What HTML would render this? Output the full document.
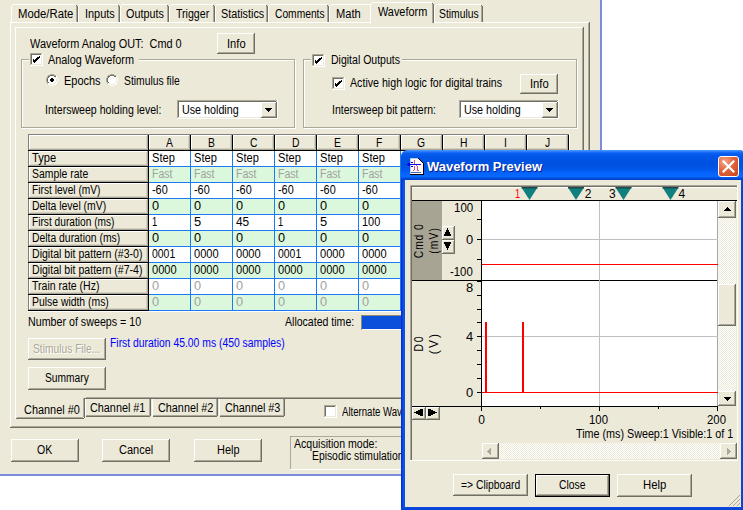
<!DOCTYPE html>
<html><head><meta charset="utf-8"><style>
html,body{margin:0;padding:0}
body{width:743px;height:510px;position:relative;overflow:hidden;background:#fff;font-family:"Liberation Sans", sans-serif;font-size:11px;color:#000}
.a{position:absolute}
.t{white-space:pre}
</style></head><body>
<div class="a" style="left:0px;top:0px;width:600px;height:474px;background:#ECE9D8;"></div>
<div class="a" style="left:600px;top:0px;width:2px;height:476px;background:#7B8BDF;"></div>
<div class="a" style="left:0px;top:474px;width:602px;height:2px;background:#7B8BDF;"></div>
<div class="a" style="left:10px;top:22px;width:580px;height:1px;background:#FFFFFF;"></div>
<div class="a" style="left:10px;top:22px;width:1px;height:406px;background:#FFFFFF;"></div>
<div class="a" style="left:10px;top:427px;width:580px;height:1px;background:#716F64;"></div>
<div class="a" style="left:589px;top:22px;width:1px;height:406px;background:#716F64;"></div>
<div class="a" style="left:11px;top:426px;width:578px;height:1px;background:#ACA899;"></div>
<div class="a" style="left:588px;top:23px;width:1px;height:404px;background:#ACA899;"></div>
<div class="a" style="left:11px;top:4px;width:67px;height:18px;background:#ECE9D8;"></div>
<div class="a" style="left:13px;top:4px;width:63px;height:1px;background:#FFFFFF;"></div>
<div class="a" style="left:12px;top:5px;width:1px;height:1px;background:#FFFFFF;"></div>
<div class="a" style="left:11px;top:6px;width:1px;height:17px;background:#FFFFFF;"></div>
<div class="a" style="left:77px;top:6px;width:1px;height:16px;background:#716F64;"></div>
<div class="a" style="left:76px;top:5px;width:1px;height:1px;background:#716F64;"></div>
<div class="a" style="left:76px;top:6px;width:1px;height:16px;background:#ACA899;"></div>
<div class="a t" style="left:18.00px;top:7px;line-height:14px;font-size:12px;color:#000;transform:scaleX(0.9437);transform-origin:0 0;">Mode/Rate</div>
<div class="a" style="left:78px;top:4px;width:42px;height:18px;background:#ECE9D8;"></div>
<div class="a" style="left:80px;top:4px;width:38px;height:1px;background:#FFFFFF;"></div>
<div class="a" style="left:79px;top:5px;width:1px;height:1px;background:#FFFFFF;"></div>
<div class="a" style="left:78px;top:6px;width:1px;height:17px;background:#FFFFFF;"></div>
<div class="a" style="left:119px;top:6px;width:1px;height:16px;background:#716F64;"></div>
<div class="a" style="left:118px;top:5px;width:1px;height:1px;background:#716F64;"></div>
<div class="a" style="left:118px;top:6px;width:1px;height:16px;background:#ACA899;"></div>
<div class="a t" style="left:84.70px;top:7px;line-height:14px;font-size:12px;color:#000;transform:scaleX(0.9112);transform-origin:0 0;">Inputs</div>
<div class="a" style="left:120px;top:4px;width:49px;height:18px;background:#ECE9D8;"></div>
<div class="a" style="left:122px;top:4px;width:45px;height:1px;background:#FFFFFF;"></div>
<div class="a" style="left:121px;top:5px;width:1px;height:1px;background:#FFFFFF;"></div>
<div class="a" style="left:120px;top:6px;width:1px;height:17px;background:#FFFFFF;"></div>
<div class="a" style="left:168px;top:6px;width:1px;height:16px;background:#716F64;"></div>
<div class="a" style="left:167px;top:5px;width:1px;height:1px;background:#716F64;"></div>
<div class="a" style="left:167px;top:6px;width:1px;height:16px;background:#ACA899;"></div>
<div class="a t" style="left:126.20px;top:7px;line-height:14px;font-size:12px;color:#000;transform:scaleX(0.8993);transform-origin:0 0;">Outputs</div>
<div class="a" style="left:169px;top:4px;width:46px;height:18px;background:#ECE9D8;"></div>
<div class="a" style="left:171px;top:4px;width:42px;height:1px;background:#FFFFFF;"></div>
<div class="a" style="left:170px;top:5px;width:1px;height:1px;background:#FFFFFF;"></div>
<div class="a" style="left:169px;top:6px;width:1px;height:17px;background:#FFFFFF;"></div>
<div class="a" style="left:214px;top:6px;width:1px;height:16px;background:#716F64;"></div>
<div class="a" style="left:213px;top:5px;width:1px;height:1px;background:#716F64;"></div>
<div class="a" style="left:213px;top:6px;width:1px;height:16px;background:#ACA899;"></div>
<div class="a t" style="left:175.90px;top:7px;line-height:14px;font-size:12px;color:#000;transform:scaleX(0.8835);transform-origin:0 0;">Trigger</div>
<div class="a" style="left:215px;top:4px;width:53px;height:18px;background:#ECE9D8;"></div>
<div class="a" style="left:217px;top:4px;width:49px;height:1px;background:#FFFFFF;"></div>
<div class="a" style="left:216px;top:5px;width:1px;height:1px;background:#FFFFFF;"></div>
<div class="a" style="left:215px;top:6px;width:1px;height:17px;background:#FFFFFF;"></div>
<div class="a" style="left:267px;top:6px;width:1px;height:16px;background:#716F64;"></div>
<div class="a" style="left:266px;top:5px;width:1px;height:1px;background:#716F64;"></div>
<div class="a" style="left:266px;top:6px;width:1px;height:16px;background:#ACA899;"></div>
<div class="a t" style="left:220.50px;top:7px;line-height:14px;font-size:12px;color:#000;transform:scaleX(0.8997);transform-origin:0 0;">Statistics</div>
<div class="a" style="left:268px;top:4px;width:61px;height:18px;background:#ECE9D8;"></div>
<div class="a" style="left:270px;top:4px;width:57px;height:1px;background:#FFFFFF;"></div>
<div class="a" style="left:269px;top:5px;width:1px;height:1px;background:#FFFFFF;"></div>
<div class="a" style="left:268px;top:6px;width:1px;height:17px;background:#FFFFFF;"></div>
<div class="a" style="left:328px;top:6px;width:1px;height:16px;background:#716F64;"></div>
<div class="a" style="left:327px;top:5px;width:1px;height:1px;background:#716F64;"></div>
<div class="a" style="left:327px;top:6px;width:1px;height:16px;background:#ACA899;"></div>
<div class="a t" style="left:274.70px;top:7px;line-height:14px;font-size:12px;color:#000;transform:scaleX(0.8549);transform-origin:0 0;">Comments</div>
<div class="a" style="left:329px;top:4px;width:43px;height:18px;background:#ECE9D8;"></div>
<div class="a" style="left:331px;top:4px;width:39px;height:1px;background:#FFFFFF;"></div>
<div class="a" style="left:330px;top:5px;width:1px;height:1px;background:#FFFFFF;"></div>
<div class="a" style="left:329px;top:6px;width:1px;height:17px;background:#FFFFFF;"></div>
<div class="a" style="left:371px;top:6px;width:1px;height:16px;background:#716F64;"></div>
<div class="a" style="left:370px;top:5px;width:1px;height:1px;background:#716F64;"></div>
<div class="a" style="left:370px;top:6px;width:1px;height:16px;background:#ACA899;"></div>
<div class="a t" style="left:335.60px;top:7px;line-height:14px;font-size:12px;color:#000;transform:scaleX(0.9255);transform-origin:0 0;">Math</div>
<div class="a" style="left:434px;top:4px;width:49px;height:18px;background:#ECE9D8;"></div>
<div class="a" style="left:436px;top:4px;width:45px;height:1px;background:#FFFFFF;"></div>
<div class="a" style="left:435px;top:5px;width:1px;height:1px;background:#FFFFFF;"></div>
<div class="a" style="left:434px;top:6px;width:1px;height:17px;background:#FFFFFF;"></div>
<div class="a" style="left:482px;top:6px;width:1px;height:16px;background:#716F64;"></div>
<div class="a" style="left:481px;top:5px;width:1px;height:1px;background:#716F64;"></div>
<div class="a" style="left:481px;top:6px;width:1px;height:16px;background:#ACA899;"></div>
<div class="a t" style="left:438.70px;top:7px;line-height:14px;font-size:12px;color:#000;transform:scaleX(0.8628);transform-origin:0 0;">Stimulus</div>
<div class="a" style="left:370px;top:2px;width:64px;height:21px;background:#ECE9D8;"></div>
<div class="a" style="left:372px;top:2px;width:60px;height:1px;background:#FFFFFF;"></div>
<div class="a" style="left:371px;top:3px;width:1px;height:1px;background:#FFFFFF;"></div>
<div class="a" style="left:370px;top:4px;width:1px;height:20px;background:#FFFFFF;"></div>
<div class="a" style="left:433px;top:4px;width:1px;height:19px;background:#716F64;"></div>
<div class="a" style="left:432px;top:3px;width:1px;height:1px;background:#716F64;"></div>
<div class="a" style="left:432px;top:4px;width:1px;height:19px;background:#ACA899;"></div>
<div class="a t" style="left:377.80px;top:5px;line-height:14px;font-size:12px;color:#000;transform:scaleX(0.9072);transform-origin:0 0;">Waveform</div>
<div class="a" style="left:15px;top:27px;width:569px;height:1px;background:#FFFFFF;"></div>
<div class="a" style="left:15px;top:27px;width:1px;height:392px;background:#FFFFFF;"></div>
<div class="a" style="left:583px;top:27px;width:1px;height:372px;background:#716F64;"></div>
<div class="a" style="left:582px;top:28px;width:1px;height:370px;background:#ACA899;"></div>
<div class="a t" style="left:30.00px;top:37px;line-height:14px;font-size:12px;color:#000;transform:scaleX(0.9086);transform-origin:0 0;">Waveform Analog OUT:  Cmd 0</div>
<div class="a" style="left:217px;top:33px;width:38px;height:21px;background:#ECE9D8;"></div>
<div class="a" style="left:217px;top:33px;width:38px;height:1px;background:#FFFFFF;"></div>
<div class="a" style="left:217px;top:33px;width:1px;height:21px;background:#FFFFFF;"></div>
<div class="a" style="left:217px;top:53px;width:38px;height:1px;background:#716F64;"></div>
<div class="a" style="left:254px;top:33px;width:1px;height:21px;background:#716F64;"></div>
<div class="a" style="left:218px;top:34px;width:36px;height:1px;background:#ECE9D8;"></div>
<div class="a" style="left:218px;top:34px;width:1px;height:19px;background:#ECE9D8;"></div>
<div class="a" style="left:218px;top:52px;width:36px;height:1px;background:#ACA899;"></div>
<div class="a" style="left:253px;top:34px;width:1px;height:19px;background:#ACA899;"></div>
<div class="a" style="left:217px;top:33px;width:37px;height:1px;background:#FFFFFF;"></div>
<div class="a" style="left:217px;top:33px;width:1px;height:20px;background:#FFFFFF;"></div>
<div class="a t" style="left:226.70px;top:37px;line-height:14px;font-size:12px;color:#000;transform:scaleX(0.9293);transform-origin:0 0;">Info</div>
<div class="a" style="left:21px;top:59px;width:274px;height:1px;background:#ACA899;"></div>
<div class="a" style="left:21px;top:59px;width:1px;height:69px;background:#ACA899;"></div>
<div class="a" style="left:21px;top:127px;width:274px;height:1px;background:#ACA899;"></div>
<div class="a" style="left:294px;top:59px;width:1px;height:69px;background:#ACA899;"></div>
<div class="a" style="left:22px;top:60px;width:274px;height:1px;background:#FFFFFF;"></div>
<div class="a" style="left:22px;top:60px;width:1px;height:69px;background:#FFFFFF;"></div>
<div class="a" style="left:22px;top:128px;width:274px;height:1px;background:#FFFFFF;"></div>
<div class="a" style="left:295px;top:60px;width:1px;height:69px;background:#FFFFFF;"></div>
<div class="a" style="left:22px;top:60px;width:272px;height:1px;background:#FFFFFF;"></div>
<div class="a" style="left:22px;top:60px;width:1px;height:67px;background:#FFFFFF;"></div>
<div class="a" style="left:21px;top:127px;width:274px;height:1px;background:#ACA899;"></div>
<div class="a" style="left:294px;top:59px;width:1px;height:69px;background:#ACA899;"></div>
<div class="a" style="left:29px;top:52px;width:110px;height:14px;background:#ECE9D8;"></div>
<div class="a" style="left:30px;top:53px;width:13px;height:13px;background:#fff;"></div>
<div class="a" style="left:30px;top:53px;width:13px;height:1px;background:#ACA899;"></div>
<div class="a" style="left:30px;top:53px;width:1px;height:13px;background:#ACA899;"></div>
<div class="a" style="left:30px;top:65px;width:13px;height:1px;background:#FFFFFF;"></div>
<div class="a" style="left:42px;top:53px;width:1px;height:13px;background:#FFFFFF;"></div>
<div class="a" style="left:31px;top:54px;width:11px;height:1px;background:#716F64;"></div>
<div class="a" style="left:31px;top:54px;width:1px;height:11px;background:#716F64;"></div>
<div class="a" style="left:31px;top:64px;width:11px;height:1px;background:#ECE9D8;"></div>
<div class="a" style="left:41px;top:54px;width:1px;height:11px;background:#ECE9D8;"></div>
<div class="a" style="left:30px;top:53px;width:12px;height:1px;background:#ACA899;"></div>
<div class="a" style="left:30px;top:53px;width:1px;height:12px;background:#ACA899;"></div>
<svg class="a" style="left:33px;top:56px" width="7" height="7" viewBox="0 0 7 7" shape-rendering="crispEdges"><path d="M6 0h1v2h-1v1h-1v1h-1v1h-1v1h-1v1h-1v-1h-1v-1h-1v-3h1v1h1v1h1v-1h1v-1h1v-1h1z" fill="#000"/></svg>
<div class="a t" style="left:48.20px;top:53px;line-height:14px;font-size:12px;color:#000;transform:scaleX(0.9059);transform-origin:0 0;">Analog Waveform</div>
<svg class="a" style="left:46px;top:74px" width="12" height="12" viewBox="0 0 12 12" shape-rendering="crispEdges">
<path d="M4 0h4v1h2v1h1v2h1v4h-1v2h-1v1h-2v1h-4v-1h-2v-1h-1v-2h-1v-4h1v-2h1v-1h2z" fill="#fff"/>
<path d="M4 0h4v1h-4zM2 1h2v1h-2zM8 1h2v1h-2zM1 2h1v2h-1zM0 4h1v4h-1zM1 8h1v2h-1z" fill="#ACA899"/>
<path d="M4 1h4v1h-4zM2 2h2v1h-2zM8 2h2v1h-2zM2 3h1v1h-1zM1 4h1v4h-1zM2 8h1v1h-1z" fill="#716F64"/>
<path d="M10 2h1v2h-1zM11 4h1v4h-1zM10 8h1v2h-1zM8 10h2v1h-2zM4 11h4v1h-4zM2 10h2v1h-2z" fill="#fff"/>
<path d="M9 3h1v1h-1zM10 4h1v4h-1zM9 8h1v1h-1zM8 9h1v1h-1zM4 10h4v1h-4zM3 9h1v1h-1z" fill="#ECE9D8"/>
<path d="M5 4h2v1h1v2h-1v1h-2v-1h-1v-2h1z" fill="#000"/>
</svg>
<div class="a t" style="left:63.80px;top:74px;line-height:14px;font-size:12px;color:#000;transform:scaleX(0.9143);transform-origin:0 0;">Epochs</div>
<svg class="a" style="left:106px;top:74px" width="12" height="12" viewBox="0 0 12 12" shape-rendering="crispEdges">
<path d="M4 0h4v1h2v1h1v2h1v4h-1v2h-1v1h-2v1h-4v-1h-2v-1h-1v-2h-1v-4h1v-2h1v-1h2z" fill="#fff"/>
<path d="M4 0h4v1h-4zM2 1h2v1h-2zM8 1h2v1h-2zM1 2h1v2h-1zM0 4h1v4h-1zM1 8h1v2h-1z" fill="#ACA899"/>
<path d="M4 1h4v1h-4zM2 2h2v1h-2zM8 2h2v1h-2zM2 3h1v1h-1zM1 4h1v4h-1zM2 8h1v1h-1z" fill="#716F64"/>
<path d="M10 2h1v2h-1zM11 4h1v4h-1zM10 8h1v2h-1zM8 10h2v1h-2zM4 11h4v1h-4zM2 10h2v1h-2z" fill="#fff"/>
<path d="M9 3h1v1h-1zM10 4h1v4h-1zM9 8h1v1h-1zM8 9h1v1h-1zM4 10h4v1h-4zM3 9h1v1h-1z" fill="#ECE9D8"/>

</svg>
<div class="a t" style="left:123.80px;top:74px;line-height:14px;font-size:12px;color:#000;transform:scaleX(0.8611);transform-origin:0 0;">Stimulus file</div>
<div class="a t" style="left:45.40px;top:103px;line-height:14px;font-size:12px;color:#000;transform:scaleX(0.8812);transform-origin:0 0;">Intersweep holding level:</div>
<div class="a" style="left:177px;top:100px;width:101px;height:19px;background:#fff;"></div>
<div class="a" style="left:177px;top:100px;width:101px;height:1px;background:#ACA899;"></div>
<div class="a" style="left:177px;top:100px;width:1px;height:19px;background:#ACA899;"></div>
<div class="a" style="left:177px;top:118px;width:101px;height:1px;background:#FFFFFF;"></div>
<div class="a" style="left:277px;top:100px;width:1px;height:19px;background:#FFFFFF;"></div>
<div class="a" style="left:178px;top:101px;width:99px;height:1px;background:#716F64;"></div>
<div class="a" style="left:178px;top:101px;width:1px;height:17px;background:#716F64;"></div>
<div class="a" style="left:178px;top:117px;width:99px;height:1px;background:#ECE9D8;"></div>
<div class="a" style="left:276px;top:101px;width:1px;height:17px;background:#ECE9D8;"></div>
<div class="a" style="left:177px;top:100px;width:100px;height:1px;background:#ACA899;"></div>
<div class="a" style="left:177px;top:100px;width:1px;height:18px;background:#ACA899;"></div>
<div class="a" style="left:261px;top:102px;width:16px;height:16px;background:#ECE9D8;"></div>
<div class="a" style="left:261px;top:102px;width:16px;height:1px;background:#FFFFFF;"></div>
<div class="a" style="left:261px;top:102px;width:1px;height:16px;background:#FFFFFF;"></div>
<div class="a" style="left:261px;top:117px;width:16px;height:1px;background:#716F64;"></div>
<div class="a" style="left:276px;top:102px;width:1px;height:16px;background:#716F64;"></div>
<div class="a" style="left:262px;top:103px;width:14px;height:1px;background:#ECE9D8;"></div>
<div class="a" style="left:262px;top:103px;width:1px;height:14px;background:#ECE9D8;"></div>
<div class="a" style="left:262px;top:116px;width:14px;height:1px;background:#ACA899;"></div>
<div class="a" style="left:275px;top:103px;width:1px;height:14px;background:#ACA899;"></div>
<div class="a" style="left:261px;top:102px;width:15px;height:1px;background:#FFFFFF;"></div>
<div class="a" style="left:261px;top:102px;width:1px;height:15px;background:#FFFFFF;"></div>
<svg class="a" style="left:265px;top:108px" width="7" height="4" shape-rendering="crispEdges"><path d="M0 0h7v1h-1v1h-1v1h-1v1h-1v-1h-1v-1h-1v-1h-1z" fill="#000"/></svg>
<div class="a t" style="left:182.00px;top:103px;line-height:14px;font-size:12px;color:#000;transform:scaleX(0.8947);transform-origin:0 0;">Use holding</div>
<div class="a" style="left:303px;top:59px;width:274px;height:1px;background:#ACA899;"></div>
<div class="a" style="left:303px;top:59px;width:1px;height:69px;background:#ACA899;"></div>
<div class="a" style="left:303px;top:127px;width:274px;height:1px;background:#ACA899;"></div>
<div class="a" style="left:576px;top:59px;width:1px;height:69px;background:#ACA899;"></div>
<div class="a" style="left:304px;top:60px;width:274px;height:1px;background:#FFFFFF;"></div>
<div class="a" style="left:304px;top:60px;width:1px;height:69px;background:#FFFFFF;"></div>
<div class="a" style="left:304px;top:128px;width:274px;height:1px;background:#FFFFFF;"></div>
<div class="a" style="left:577px;top:60px;width:1px;height:69px;background:#FFFFFF;"></div>
<div class="a" style="left:304px;top:60px;width:272px;height:1px;background:#FFFFFF;"></div>
<div class="a" style="left:304px;top:60px;width:1px;height:67px;background:#FFFFFF;"></div>
<div class="a" style="left:303px;top:127px;width:274px;height:1px;background:#ACA899;"></div>
<div class="a" style="left:576px;top:59px;width:1px;height:69px;background:#ACA899;"></div>
<div class="a" style="left:311px;top:52px;width:91px;height:14px;background:#ECE9D8;"></div>
<div class="a" style="left:312px;top:54px;width:13px;height:13px;background:#fff;"></div>
<div class="a" style="left:312px;top:54px;width:13px;height:1px;background:#ACA899;"></div>
<div class="a" style="left:312px;top:54px;width:1px;height:13px;background:#ACA899;"></div>
<div class="a" style="left:312px;top:66px;width:13px;height:1px;background:#FFFFFF;"></div>
<div class="a" style="left:324px;top:54px;width:1px;height:13px;background:#FFFFFF;"></div>
<div class="a" style="left:313px;top:55px;width:11px;height:1px;background:#716F64;"></div>
<div class="a" style="left:313px;top:55px;width:1px;height:11px;background:#716F64;"></div>
<div class="a" style="left:313px;top:65px;width:11px;height:1px;background:#ECE9D8;"></div>
<div class="a" style="left:323px;top:55px;width:1px;height:11px;background:#ECE9D8;"></div>
<div class="a" style="left:312px;top:54px;width:12px;height:1px;background:#ACA899;"></div>
<div class="a" style="left:312px;top:54px;width:1px;height:12px;background:#ACA899;"></div>
<svg class="a" style="left:315px;top:57px" width="7" height="7" viewBox="0 0 7 7" shape-rendering="crispEdges"><path d="M6 0h1v2h-1v1h-1v1h-1v1h-1v1h-1v1h-1v-1h-1v-1h-1v-3h1v1h1v1h1v-1h1v-1h1v-1h1z" fill="#000"/></svg>
<div class="a t" style="left:331.20px;top:53px;line-height:14px;font-size:12px;color:#000;transform:scaleX(0.8767);transform-origin:0 0;">Digital Outputs</div>
<div class="a" style="left:332px;top:77px;width:13px;height:13px;background:#fff;"></div>
<div class="a" style="left:332px;top:77px;width:13px;height:1px;background:#ACA899;"></div>
<div class="a" style="left:332px;top:77px;width:1px;height:13px;background:#ACA899;"></div>
<div class="a" style="left:332px;top:89px;width:13px;height:1px;background:#FFFFFF;"></div>
<div class="a" style="left:344px;top:77px;width:1px;height:13px;background:#FFFFFF;"></div>
<div class="a" style="left:333px;top:78px;width:11px;height:1px;background:#716F64;"></div>
<div class="a" style="left:333px;top:78px;width:1px;height:11px;background:#716F64;"></div>
<div class="a" style="left:333px;top:88px;width:11px;height:1px;background:#ECE9D8;"></div>
<div class="a" style="left:343px;top:78px;width:1px;height:11px;background:#ECE9D8;"></div>
<div class="a" style="left:332px;top:77px;width:12px;height:1px;background:#ACA899;"></div>
<div class="a" style="left:332px;top:77px;width:1px;height:12px;background:#ACA899;"></div>
<svg class="a" style="left:335px;top:80px" width="7" height="7" viewBox="0 0 7 7" shape-rendering="crispEdges"><path d="M6 0h1v2h-1v1h-1v1h-1v1h-1v1h-1v1h-1v-1h-1v-1h-1v-3h1v1h1v1h1v-1h1v-1h1v-1h1z" fill="#000"/></svg>
<div class="a t" style="left:349.50px;top:76px;line-height:14px;font-size:12px;color:#000;transform:scaleX(0.8873);transform-origin:0 0;">Active high logic for digital trains</div>
<div class="a" style="left:520px;top:74px;width:38px;height:20px;background:#ECE9D8;"></div>
<div class="a" style="left:520px;top:74px;width:38px;height:1px;background:#FFFFFF;"></div>
<div class="a" style="left:520px;top:74px;width:1px;height:20px;background:#FFFFFF;"></div>
<div class="a" style="left:520px;top:93px;width:38px;height:1px;background:#716F64;"></div>
<div class="a" style="left:557px;top:74px;width:1px;height:20px;background:#716F64;"></div>
<div class="a" style="left:521px;top:75px;width:36px;height:1px;background:#ECE9D8;"></div>
<div class="a" style="left:521px;top:75px;width:1px;height:18px;background:#ECE9D8;"></div>
<div class="a" style="left:521px;top:92px;width:36px;height:1px;background:#ACA899;"></div>
<div class="a" style="left:556px;top:75px;width:1px;height:18px;background:#ACA899;"></div>
<div class="a" style="left:520px;top:74px;width:37px;height:1px;background:#FFFFFF;"></div>
<div class="a" style="left:520px;top:74px;width:1px;height:19px;background:#FFFFFF;"></div>
<div class="a t" style="left:529.65px;top:77px;line-height:14px;font-size:12px;color:#000;transform:scaleX(0.9343);transform-origin:0 0;">Info</div>
<div class="a t" style="left:331.90px;top:103px;line-height:14px;font-size:12px;color:#000;transform:scaleX(0.8751);transform-origin:0 0;">Intersweep bit pattern:</div>
<div class="a" style="left:459px;top:100px;width:100px;height:19px;background:#fff;"></div>
<div class="a" style="left:459px;top:100px;width:100px;height:1px;background:#ACA899;"></div>
<div class="a" style="left:459px;top:100px;width:1px;height:19px;background:#ACA899;"></div>
<div class="a" style="left:459px;top:118px;width:100px;height:1px;background:#FFFFFF;"></div>
<div class="a" style="left:558px;top:100px;width:1px;height:19px;background:#FFFFFF;"></div>
<div class="a" style="left:460px;top:101px;width:98px;height:1px;background:#716F64;"></div>
<div class="a" style="left:460px;top:101px;width:1px;height:17px;background:#716F64;"></div>
<div class="a" style="left:460px;top:117px;width:98px;height:1px;background:#ECE9D8;"></div>
<div class="a" style="left:557px;top:101px;width:1px;height:17px;background:#ECE9D8;"></div>
<div class="a" style="left:459px;top:100px;width:99px;height:1px;background:#ACA899;"></div>
<div class="a" style="left:459px;top:100px;width:1px;height:18px;background:#ACA899;"></div>
<div class="a" style="left:542px;top:102px;width:16px;height:16px;background:#ECE9D8;"></div>
<div class="a" style="left:542px;top:102px;width:16px;height:1px;background:#FFFFFF;"></div>
<div class="a" style="left:542px;top:102px;width:1px;height:16px;background:#FFFFFF;"></div>
<div class="a" style="left:542px;top:117px;width:16px;height:1px;background:#716F64;"></div>
<div class="a" style="left:557px;top:102px;width:1px;height:16px;background:#716F64;"></div>
<div class="a" style="left:543px;top:103px;width:14px;height:1px;background:#ECE9D8;"></div>
<div class="a" style="left:543px;top:103px;width:1px;height:14px;background:#ECE9D8;"></div>
<div class="a" style="left:543px;top:116px;width:14px;height:1px;background:#ACA899;"></div>
<div class="a" style="left:556px;top:103px;width:1px;height:14px;background:#ACA899;"></div>
<div class="a" style="left:542px;top:102px;width:15px;height:1px;background:#FFFFFF;"></div>
<div class="a" style="left:542px;top:102px;width:1px;height:15px;background:#FFFFFF;"></div>
<svg class="a" style="left:546px;top:108px" width="7" height="4" shape-rendering="crispEdges"><path d="M0 0h7v1h-1v1h-1v1h-1v1h-1v-1h-1v-1h-1v-1h-1z" fill="#000"/></svg>
<div class="a t" style="left:464.00px;top:103px;line-height:14px;font-size:12px;color:#000;transform:scaleX(0.8947);transform-origin:0 0;">Use holding</div>
<div class="a" style="left:28px;top:134px;width:541px;height:1px;background:#808080;"></div>
<div class="a" style="left:28px;top:134px;width:1px;height:177px;background:#808080;"></div>
<div class="a" style="left:29px;top:135px;width:119px;height:15px;background:#ECE9D8;"></div>
<div class="a" style="left:30px;top:148px;width:117px;height:1px;background:#D4D0C0;"></div>
<div class="a" style="left:146px;top:136px;width:1px;height:13px;background:#D4D0C0;"></div>
<div class="a" style="left:29px;top:135px;width:119px;height:1px;background:#FFFFFF;"></div>
<div class="a" style="left:29px;top:135px;width:1px;height:15px;background:#FFFFFF;"></div>
<div class="a" style="left:29px;top:149px;width:119px;height:1px;background:#ACA899;"></div>
<div class="a" style="left:147px;top:135px;width:1px;height:15px;background:#ACA899;"></div>
<div class="a" style="left:149px;top:135px;width:41px;height:15px;background:#ECE9D8;"></div>
<div class="a" style="left:150px;top:148px;width:39px;height:1px;background:#D4D0C0;"></div>
<div class="a" style="left:188px;top:136px;width:1px;height:13px;background:#D4D0C0;"></div>
<div class="a" style="left:149px;top:135px;width:41px;height:1px;background:#FFFFFF;"></div>
<div class="a" style="left:149px;top:135px;width:1px;height:15px;background:#FFFFFF;"></div>
<div class="a" style="left:149px;top:149px;width:41px;height:1px;background:#ACA899;"></div>
<div class="a" style="left:189px;top:135px;width:1px;height:15px;background:#ACA899;"></div>
<div class="a t" style="left:166.05px;top:136px;line-height:14px;font-size:12px;color:#000;transform:scaleX(0.8620);transform-origin:0 0;">A</div>
<div class="a" style="left:191px;top:135px;width:41px;height:15px;background:#ECE9D8;"></div>
<div class="a" style="left:192px;top:148px;width:39px;height:1px;background:#D4D0C0;"></div>
<div class="a" style="left:230px;top:136px;width:1px;height:13px;background:#D4D0C0;"></div>
<div class="a" style="left:191px;top:135px;width:41px;height:1px;background:#FFFFFF;"></div>
<div class="a" style="left:191px;top:135px;width:1px;height:15px;background:#FFFFFF;"></div>
<div class="a" style="left:191px;top:149px;width:41px;height:1px;background:#ACA899;"></div>
<div class="a" style="left:231px;top:135px;width:1px;height:15px;background:#ACA899;"></div>
<div class="a t" style="left:208.05px;top:136px;line-height:14px;font-size:12px;color:#000;transform:scaleX(0.8620);transform-origin:0 0;">B</div>
<div class="a" style="left:233px;top:135px;width:41px;height:15px;background:#ECE9D8;"></div>
<div class="a" style="left:234px;top:148px;width:39px;height:1px;background:#D4D0C0;"></div>
<div class="a" style="left:272px;top:136px;width:1px;height:13px;background:#D4D0C0;"></div>
<div class="a" style="left:233px;top:135px;width:41px;height:1px;background:#FFFFFF;"></div>
<div class="a" style="left:233px;top:135px;width:1px;height:15px;background:#FFFFFF;"></div>
<div class="a" style="left:233px;top:149px;width:41px;height:1px;background:#ACA899;"></div>
<div class="a" style="left:273px;top:135px;width:1px;height:15px;background:#ACA899;"></div>
<div class="a t" style="left:249.76px;top:136px;line-height:14px;font-size:12px;color:#000;transform:scaleX(0.8620);transform-origin:0 0;">C</div>
<div class="a" style="left:275px;top:135px;width:41px;height:15px;background:#ECE9D8;"></div>
<div class="a" style="left:276px;top:148px;width:39px;height:1px;background:#D4D0C0;"></div>
<div class="a" style="left:314px;top:136px;width:1px;height:13px;background:#D4D0C0;"></div>
<div class="a" style="left:275px;top:135px;width:41px;height:1px;background:#FFFFFF;"></div>
<div class="a" style="left:275px;top:135px;width:1px;height:15px;background:#FFFFFF;"></div>
<div class="a" style="left:275px;top:149px;width:41px;height:1px;background:#ACA899;"></div>
<div class="a" style="left:315px;top:135px;width:1px;height:15px;background:#ACA899;"></div>
<div class="a t" style="left:291.76px;top:136px;line-height:14px;font-size:12px;color:#000;transform:scaleX(0.8620);transform-origin:0 0;">D</div>
<div class="a" style="left:317px;top:135px;width:41px;height:15px;background:#ECE9D8;"></div>
<div class="a" style="left:318px;top:148px;width:39px;height:1px;background:#D4D0C0;"></div>
<div class="a" style="left:356px;top:136px;width:1px;height:13px;background:#D4D0C0;"></div>
<div class="a" style="left:317px;top:135px;width:41px;height:1px;background:#FFFFFF;"></div>
<div class="a" style="left:317px;top:135px;width:1px;height:15px;background:#FFFFFF;"></div>
<div class="a" style="left:317px;top:149px;width:41px;height:1px;background:#ACA899;"></div>
<div class="a" style="left:357px;top:135px;width:1px;height:15px;background:#ACA899;"></div>
<div class="a t" style="left:334.05px;top:136px;line-height:14px;font-size:12px;color:#000;transform:scaleX(0.8620);transform-origin:0 0;">E</div>
<div class="a" style="left:359px;top:135px;width:41px;height:15px;background:#ECE9D8;"></div>
<div class="a" style="left:360px;top:148px;width:39px;height:1px;background:#D4D0C0;"></div>
<div class="a" style="left:398px;top:136px;width:1px;height:13px;background:#D4D0C0;"></div>
<div class="a" style="left:359px;top:135px;width:41px;height:1px;background:#FFFFFF;"></div>
<div class="a" style="left:359px;top:135px;width:1px;height:15px;background:#FFFFFF;"></div>
<div class="a" style="left:359px;top:149px;width:41px;height:1px;background:#ACA899;"></div>
<div class="a" style="left:399px;top:135px;width:1px;height:15px;background:#ACA899;"></div>
<div class="a t" style="left:376.33px;top:136px;line-height:14px;font-size:12px;color:#000;transform:scaleX(0.8620);transform-origin:0 0;">F</div>
<div class="a" style="left:401px;top:135px;width:41px;height:15px;background:#ECE9D8;"></div>
<div class="a" style="left:402px;top:148px;width:39px;height:1px;background:#D4D0C0;"></div>
<div class="a" style="left:440px;top:136px;width:1px;height:13px;background:#D4D0C0;"></div>
<div class="a" style="left:401px;top:135px;width:41px;height:1px;background:#FFFFFF;"></div>
<div class="a" style="left:401px;top:135px;width:1px;height:15px;background:#FFFFFF;"></div>
<div class="a" style="left:401px;top:149px;width:41px;height:1px;background:#ACA899;"></div>
<div class="a" style="left:441px;top:135px;width:1px;height:15px;background:#ACA899;"></div>
<div class="a t" style="left:417.47px;top:136px;line-height:14px;font-size:12px;color:#000;transform:scaleX(0.8620);transform-origin:0 0;">G</div>
<div class="a" style="left:443px;top:135px;width:41px;height:15px;background:#ECE9D8;"></div>
<div class="a" style="left:444px;top:148px;width:39px;height:1px;background:#D4D0C0;"></div>
<div class="a" style="left:482px;top:136px;width:1px;height:13px;background:#D4D0C0;"></div>
<div class="a" style="left:443px;top:135px;width:41px;height:1px;background:#FFFFFF;"></div>
<div class="a" style="left:443px;top:135px;width:1px;height:15px;background:#FFFFFF;"></div>
<div class="a" style="left:443px;top:149px;width:41px;height:1px;background:#ACA899;"></div>
<div class="a" style="left:483px;top:135px;width:1px;height:15px;background:#ACA899;"></div>
<div class="a t" style="left:459.76px;top:136px;line-height:14px;font-size:12px;color:#000;transform:scaleX(0.8620);transform-origin:0 0;">H</div>
<div class="a" style="left:485px;top:135px;width:41px;height:15px;background:#ECE9D8;"></div>
<div class="a" style="left:486px;top:148px;width:39px;height:1px;background:#D4D0C0;"></div>
<div class="a" style="left:524px;top:136px;width:1px;height:13px;background:#D4D0C0;"></div>
<div class="a" style="left:485px;top:135px;width:41px;height:1px;background:#FFFFFF;"></div>
<div class="a" style="left:485px;top:135px;width:1px;height:15px;background:#FFFFFF;"></div>
<div class="a" style="left:485px;top:149px;width:41px;height:1px;background:#ACA899;"></div>
<div class="a" style="left:525px;top:135px;width:1px;height:15px;background:#ACA899;"></div>
<div class="a t" style="left:504.06px;top:136px;line-height:14px;font-size:12px;color:#000;transform:scaleX(0.8620);transform-origin:0 0;">I</div>
<div class="a" style="left:527px;top:135px;width:41px;height:15px;background:#ECE9D8;"></div>
<div class="a" style="left:528px;top:148px;width:39px;height:1px;background:#D4D0C0;"></div>
<div class="a" style="left:566px;top:136px;width:1px;height:13px;background:#D4D0C0;"></div>
<div class="a" style="left:527px;top:135px;width:41px;height:1px;background:#FFFFFF;"></div>
<div class="a" style="left:527px;top:135px;width:1px;height:15px;background:#FFFFFF;"></div>
<div class="a" style="left:527px;top:149px;width:41px;height:1px;background:#ACA899;"></div>
<div class="a" style="left:567px;top:135px;width:1px;height:15px;background:#ACA899;"></div>
<div class="a t" style="left:544.91px;top:136px;line-height:14px;font-size:12px;color:#000;transform:scaleX(0.8620);transform-origin:0 0;">J</div>
<div class="a" style="left:28px;top:150px;width:541px;height:1px;background:#000;"></div>
<div class="a" style="left:148px;top:135px;width:1px;height:16px;background:#000;"></div>
<div class="a" style="left:190px;top:135px;width:1px;height:16px;background:#000;"></div>
<div class="a" style="left:232px;top:135px;width:1px;height:16px;background:#000;"></div>
<div class="a" style="left:274px;top:135px;width:1px;height:16px;background:#000;"></div>
<div class="a" style="left:316px;top:135px;width:1px;height:16px;background:#000;"></div>
<div class="a" style="left:358px;top:135px;width:1px;height:16px;background:#000;"></div>
<div class="a" style="left:400px;top:135px;width:1px;height:16px;background:#000;"></div>
<div class="a" style="left:442px;top:135px;width:1px;height:16px;background:#000;"></div>
<div class="a" style="left:484px;top:135px;width:1px;height:16px;background:#000;"></div>
<div class="a" style="left:526px;top:135px;width:1px;height:16px;background:#000;"></div>
<div class="a" style="left:568px;top:135px;width:1px;height:16px;background:#000;"></div>
<div class="a" style="left:29px;top:151px;width:119px;height:15px;background:#ECE9D8;"></div>
<div class="a" style="left:30px;top:164px;width:117px;height:1px;background:#D4D0C0;"></div>
<div class="a" style="left:146px;top:152px;width:1px;height:13px;background:#D4D0C0;"></div>
<div class="a" style="left:29px;top:151px;width:119px;height:1px;background:#FFFFFF;"></div>
<div class="a" style="left:29px;top:151px;width:1px;height:15px;background:#FFFFFF;"></div>
<div class="a" style="left:29px;top:165px;width:119px;height:1px;background:#ACA899;"></div>
<div class="a" style="left:147px;top:151px;width:1px;height:15px;background:#ACA899;"></div>
<div class="a" style="left:28px;top:166px;width:121px;height:1px;background:#000;"></div>
<div class="a t" style="left:32.10px;top:151px;line-height:14px;font-size:12px;color:#000;transform:scaleX(0.9302);transform-origin:0 0;">Type</div>
<div class="a" style="left:29px;top:167px;width:119px;height:15px;background:#ECE9D8;"></div>
<div class="a" style="left:30px;top:180px;width:117px;height:1px;background:#D4D0C0;"></div>
<div class="a" style="left:146px;top:168px;width:1px;height:13px;background:#D4D0C0;"></div>
<div class="a" style="left:29px;top:167px;width:119px;height:1px;background:#FFFFFF;"></div>
<div class="a" style="left:29px;top:167px;width:1px;height:15px;background:#FFFFFF;"></div>
<div class="a" style="left:29px;top:181px;width:119px;height:1px;background:#ACA899;"></div>
<div class="a" style="left:147px;top:167px;width:1px;height:15px;background:#ACA899;"></div>
<div class="a" style="left:28px;top:182px;width:121px;height:1px;background:#000;"></div>
<div class="a t" style="left:32.10px;top:167px;line-height:14px;font-size:12px;color:#000;transform:scaleX(0.8686);transform-origin:0 0;">Sample rate</div>
<div class="a" style="left:29px;top:183px;width:119px;height:15px;background:#ECE9D8;"></div>
<div class="a" style="left:30px;top:196px;width:117px;height:1px;background:#D4D0C0;"></div>
<div class="a" style="left:146px;top:184px;width:1px;height:13px;background:#D4D0C0;"></div>
<div class="a" style="left:29px;top:183px;width:119px;height:1px;background:#FFFFFF;"></div>
<div class="a" style="left:29px;top:183px;width:1px;height:15px;background:#FFFFFF;"></div>
<div class="a" style="left:29px;top:197px;width:119px;height:1px;background:#ACA899;"></div>
<div class="a" style="left:147px;top:183px;width:1px;height:15px;background:#ACA899;"></div>
<div class="a" style="left:28px;top:198px;width:121px;height:1px;background:#000;"></div>
<div class="a t" style="left:32.10px;top:183px;line-height:14px;font-size:12px;color:#000;transform:scaleX(0.8491);transform-origin:0 0;">First level (mV)</div>
<div class="a" style="left:29px;top:199px;width:119px;height:15px;background:#ECE9D8;"></div>
<div class="a" style="left:30px;top:212px;width:117px;height:1px;background:#D4D0C0;"></div>
<div class="a" style="left:146px;top:200px;width:1px;height:13px;background:#D4D0C0;"></div>
<div class="a" style="left:29px;top:199px;width:119px;height:1px;background:#FFFFFF;"></div>
<div class="a" style="left:29px;top:199px;width:1px;height:15px;background:#FFFFFF;"></div>
<div class="a" style="left:29px;top:213px;width:119px;height:1px;background:#ACA899;"></div>
<div class="a" style="left:147px;top:199px;width:1px;height:15px;background:#ACA899;"></div>
<div class="a" style="left:28px;top:214px;width:121px;height:1px;background:#000;"></div>
<div class="a t" style="left:32.10px;top:199px;line-height:14px;font-size:12px;color:#000;transform:scaleX(0.8693);transform-origin:0 0;">Delta level (mV)</div>
<div class="a" style="left:29px;top:215px;width:119px;height:15px;background:#ECE9D8;"></div>
<div class="a" style="left:30px;top:228px;width:117px;height:1px;background:#D4D0C0;"></div>
<div class="a" style="left:146px;top:216px;width:1px;height:13px;background:#D4D0C0;"></div>
<div class="a" style="left:29px;top:215px;width:119px;height:1px;background:#FFFFFF;"></div>
<div class="a" style="left:29px;top:215px;width:1px;height:15px;background:#FFFFFF;"></div>
<div class="a" style="left:29px;top:229px;width:119px;height:1px;background:#ACA899;"></div>
<div class="a" style="left:147px;top:215px;width:1px;height:15px;background:#ACA899;"></div>
<div class="a" style="left:28px;top:230px;width:121px;height:1px;background:#000;"></div>
<div class="a t" style="left:32.10px;top:215px;line-height:14px;font-size:12px;color:#000;transform:scaleX(0.8474);transform-origin:0 0;">First duration (ms)</div>
<div class="a" style="left:29px;top:231px;width:119px;height:15px;background:#ECE9D8;"></div>
<div class="a" style="left:30px;top:244px;width:117px;height:1px;background:#D4D0C0;"></div>
<div class="a" style="left:146px;top:232px;width:1px;height:13px;background:#D4D0C0;"></div>
<div class="a" style="left:29px;top:231px;width:119px;height:1px;background:#FFFFFF;"></div>
<div class="a" style="left:29px;top:231px;width:1px;height:15px;background:#FFFFFF;"></div>
<div class="a" style="left:29px;top:245px;width:119px;height:1px;background:#ACA899;"></div>
<div class="a" style="left:147px;top:231px;width:1px;height:15px;background:#ACA899;"></div>
<div class="a" style="left:28px;top:246px;width:121px;height:1px;background:#000;"></div>
<div class="a t" style="left:32.10px;top:231px;line-height:14px;font-size:12px;color:#000;transform:scaleX(0.8643);transform-origin:0 0;">Delta duration (ms)</div>
<div class="a" style="left:29px;top:247px;width:119px;height:15px;background:#ECE9D8;"></div>
<div class="a" style="left:30px;top:260px;width:117px;height:1px;background:#D4D0C0;"></div>
<div class="a" style="left:146px;top:248px;width:1px;height:13px;background:#D4D0C0;"></div>
<div class="a" style="left:29px;top:247px;width:119px;height:1px;background:#FFFFFF;"></div>
<div class="a" style="left:29px;top:247px;width:1px;height:15px;background:#FFFFFF;"></div>
<div class="a" style="left:29px;top:261px;width:119px;height:1px;background:#ACA899;"></div>
<div class="a" style="left:147px;top:247px;width:1px;height:15px;background:#ACA899;"></div>
<div class="a" style="left:28px;top:262px;width:121px;height:1px;background:#000;"></div>
<div class="a t" style="left:32.10px;top:247px;line-height:14px;font-size:12px;color:#000;transform:scaleX(0.8812);transform-origin:0 0;">Digital bit pattern (#3-0)</div>
<div class="a" style="left:29px;top:263px;width:119px;height:15px;background:#ECE9D8;"></div>
<div class="a" style="left:30px;top:276px;width:117px;height:1px;background:#D4D0C0;"></div>
<div class="a" style="left:146px;top:264px;width:1px;height:13px;background:#D4D0C0;"></div>
<div class="a" style="left:29px;top:263px;width:119px;height:1px;background:#FFFFFF;"></div>
<div class="a" style="left:29px;top:263px;width:1px;height:15px;background:#FFFFFF;"></div>
<div class="a" style="left:29px;top:277px;width:119px;height:1px;background:#ACA899;"></div>
<div class="a" style="left:147px;top:263px;width:1px;height:15px;background:#ACA899;"></div>
<div class="a" style="left:28px;top:278px;width:121px;height:1px;background:#000;"></div>
<div class="a t" style="left:32.10px;top:263px;line-height:14px;font-size:12px;color:#000;transform:scaleX(0.8812);transform-origin:0 0;">Digital bit pattern (#7-4)</div>
<div class="a" style="left:29px;top:279px;width:119px;height:15px;background:#ECE9D8;"></div>
<div class="a" style="left:30px;top:292px;width:117px;height:1px;background:#D4D0C0;"></div>
<div class="a" style="left:146px;top:280px;width:1px;height:13px;background:#D4D0C0;"></div>
<div class="a" style="left:29px;top:279px;width:119px;height:1px;background:#FFFFFF;"></div>
<div class="a" style="left:29px;top:279px;width:1px;height:15px;background:#FFFFFF;"></div>
<div class="a" style="left:29px;top:293px;width:119px;height:1px;background:#ACA899;"></div>
<div class="a" style="left:147px;top:279px;width:1px;height:15px;background:#ACA899;"></div>
<div class="a" style="left:28px;top:294px;width:121px;height:1px;background:#000;"></div>
<div class="a t" style="left:32.10px;top:279px;line-height:14px;font-size:12px;color:#000;transform:scaleX(0.8777);transform-origin:0 0;">Train rate (Hz)</div>
<div class="a" style="left:29px;top:295px;width:119px;height:15px;background:#ECE9D8;"></div>
<div class="a" style="left:30px;top:308px;width:117px;height:1px;background:#D4D0C0;"></div>
<div class="a" style="left:146px;top:296px;width:1px;height:13px;background:#D4D0C0;"></div>
<div class="a" style="left:29px;top:295px;width:119px;height:1px;background:#FFFFFF;"></div>
<div class="a" style="left:29px;top:295px;width:1px;height:15px;background:#FFFFFF;"></div>
<div class="a" style="left:29px;top:309px;width:119px;height:1px;background:#ACA899;"></div>
<div class="a" style="left:147px;top:295px;width:1px;height:15px;background:#ACA899;"></div>
<div class="a" style="left:28px;top:310px;width:121px;height:1px;background:#000;"></div>
<div class="a t" style="left:32.10px;top:295px;line-height:14px;font-size:12px;color:#000;transform:scaleX(0.8660);transform-origin:0 0;">Pulse width (ms)</div>
<div class="a" style="left:148px;top:150px;width:1px;height:161px;background:#000;"></div>
<div class="a" style="left:28px;top:311px;width:542px;height:1px;background:#FFFFFF;"></div>
<div class="a" style="left:569px;top:134px;width:1px;height:178px;background:#FFFFFF;"></div>
<div class="a" style="left:149px;top:151px;width:420px;height:15px;background:#fff;"></div>
<div class="a" style="left:149px;top:166px;width:420px;height:1px;background:#1A7AF5;"></div>
<div class="a t" style="left:151.50px;top:151px;line-height:14px;font-size:12px;color:#000;transform:scaleX(0.9235);transform-origin:0 0;">Step</div>
<div class="a t" style="left:193.50px;top:151px;line-height:14px;font-size:12px;color:#000;transform:scaleX(0.9235);transform-origin:0 0;">Step</div>
<div class="a t" style="left:235.50px;top:151px;line-height:14px;font-size:12px;color:#000;transform:scaleX(0.9235);transform-origin:0 0;">Step</div>
<div class="a t" style="left:277.50px;top:151px;line-height:14px;font-size:12px;color:#000;transform:scaleX(0.9235);transform-origin:0 0;">Step</div>
<div class="a t" style="left:319.50px;top:151px;line-height:14px;font-size:12px;color:#000;transform:scaleX(0.9235);transform-origin:0 0;">Step</div>
<div class="a t" style="left:361.50px;top:151px;line-height:14px;font-size:12px;color:#000;transform:scaleX(0.9235);transform-origin:0 0;">Step</div>
<div class="a" style="left:149px;top:167px;width:420px;height:15px;background:#DCF8DC;"></div>
<div class="a" style="left:149px;top:182px;width:420px;height:1px;background:#1A7AF5;"></div>
<div class="a t" style="left:151.50px;top:167px;line-height:14px;font-size:12px;color:#A0A0A0;transform:scaleX(0.8782);transform-origin:0 0;">Fast</div>
<div class="a t" style="left:193.50px;top:167px;line-height:14px;font-size:12px;color:#A0A0A0;transform:scaleX(0.8782);transform-origin:0 0;">Fast</div>
<div class="a t" style="left:235.50px;top:167px;line-height:14px;font-size:12px;color:#A0A0A0;transform:scaleX(0.8782);transform-origin:0 0;">Fast</div>
<div class="a t" style="left:277.50px;top:167px;line-height:14px;font-size:12px;color:#A0A0A0;transform:scaleX(0.8782);transform-origin:0 0;">Fast</div>
<div class="a t" style="left:319.50px;top:167px;line-height:14px;font-size:12px;color:#A0A0A0;transform:scaleX(0.8782);transform-origin:0 0;">Fast</div>
<div class="a t" style="left:361.50px;top:167px;line-height:14px;font-size:12px;color:#A0A0A0;transform:scaleX(0.8782);transform-origin:0 0;">Fast</div>
<div class="a" style="left:149px;top:183px;width:420px;height:15px;background:#fff;"></div>
<div class="a" style="left:149px;top:198px;width:420px;height:1px;background:#1A7AF5;"></div>
<div class="a t" style="left:151.50px;top:183px;line-height:14px;font-size:12px;color:#000;transform:scaleX(0.9052);transform-origin:0 0;">-60</div>
<div class="a t" style="left:193.50px;top:183px;line-height:14px;font-size:12px;color:#000;transform:scaleX(0.9052);transform-origin:0 0;">-60</div>
<div class="a t" style="left:235.50px;top:183px;line-height:14px;font-size:12px;color:#000;transform:scaleX(0.9052);transform-origin:0 0;">-60</div>
<div class="a t" style="left:277.50px;top:183px;line-height:14px;font-size:12px;color:#000;transform:scaleX(0.9052);transform-origin:0 0;">-60</div>
<div class="a t" style="left:319.50px;top:183px;line-height:14px;font-size:12px;color:#000;transform:scaleX(0.9052);transform-origin:0 0;">-60</div>
<div class="a t" style="left:361.50px;top:183px;line-height:14px;font-size:12px;color:#000;transform:scaleX(0.9052);transform-origin:0 0;">-60</div>
<div class="a" style="left:149px;top:199px;width:420px;height:15px;background:#DCF8DC;"></div>
<div class="a" style="left:149px;top:214px;width:420px;height:1px;background:#1A7AF5;"></div>
<div class="a t" style="left:151.50px;top:199px;line-height:14px;font-size:12px;color:#000;transform:scaleX(1.0617);transform-origin:0 0;">0</div>
<div class="a t" style="left:193.50px;top:199px;line-height:14px;font-size:12px;color:#000;transform:scaleX(1.0617);transform-origin:0 0;">0</div>
<div class="a t" style="left:235.50px;top:199px;line-height:14px;font-size:12px;color:#000;transform:scaleX(1.0617);transform-origin:0 0;">0</div>
<div class="a t" style="left:277.50px;top:199px;line-height:14px;font-size:12px;color:#000;transform:scaleX(1.0617);transform-origin:0 0;">0</div>
<div class="a t" style="left:319.50px;top:199px;line-height:14px;font-size:12px;color:#000;transform:scaleX(1.0617);transform-origin:0 0;">0</div>
<div class="a t" style="left:361.50px;top:199px;line-height:14px;font-size:12px;color:#000;transform:scaleX(1.0617);transform-origin:0 0;">0</div>
<div class="a" style="left:149px;top:215px;width:420px;height:15px;background:#fff;"></div>
<div class="a" style="left:149px;top:230px;width:420px;height:1px;background:#1A7AF5;"></div>
<div class="a t" style="left:151.50px;top:215px;line-height:14px;font-size:12px;color:#000;transform:scaleX(0.7776);transform-origin:0 0;">1</div>
<div class="a t" style="left:193.50px;top:215px;line-height:14px;font-size:12px;color:#000;transform:scaleX(1.0766);transform-origin:0 0;">5</div>
<div class="a t" style="left:235.50px;top:215px;line-height:14px;font-size:12px;color:#000;transform:scaleX(0.9881);transform-origin:0 0;">45</div>
<div class="a t" style="left:277.50px;top:215px;line-height:14px;font-size:12px;color:#000;transform:scaleX(0.7776);transform-origin:0 0;">1</div>
<div class="a t" style="left:319.50px;top:215px;line-height:14px;font-size:12px;color:#000;transform:scaleX(1.0766);transform-origin:0 0;">5</div>
<div class="a t" style="left:361.50px;top:215px;line-height:14px;font-size:12px;color:#000;transform:scaleX(0.9086);transform-origin:0 0;">100</div>
<div class="a" style="left:149px;top:231px;width:420px;height:15px;background:#DCF8DC;"></div>
<div class="a" style="left:149px;top:246px;width:420px;height:1px;background:#1A7AF5;"></div>
<div class="a t" style="left:151.50px;top:231px;line-height:14px;font-size:12px;color:#000;transform:scaleX(1.0617);transform-origin:0 0;">0</div>
<div class="a t" style="left:193.50px;top:231px;line-height:14px;font-size:12px;color:#000;transform:scaleX(1.0617);transform-origin:0 0;">0</div>
<div class="a t" style="left:235.50px;top:231px;line-height:14px;font-size:12px;color:#000;transform:scaleX(1.0617);transform-origin:0 0;">0</div>
<div class="a t" style="left:277.50px;top:231px;line-height:14px;font-size:12px;color:#000;transform:scaleX(1.0617);transform-origin:0 0;">0</div>
<div class="a t" style="left:319.50px;top:231px;line-height:14px;font-size:12px;color:#000;transform:scaleX(1.0617);transform-origin:0 0;">0</div>
<div class="a t" style="left:361.50px;top:231px;line-height:14px;font-size:12px;color:#000;transform:scaleX(1.0617);transform-origin:0 0;">0</div>
<div class="a" style="left:149px;top:247px;width:420px;height:15px;background:#fff;"></div>
<div class="a" style="left:149px;top:262px;width:420px;height:1px;background:#1A7AF5;"></div>
<div class="a t" style="left:151.50px;top:247px;line-height:14px;font-size:12px;color:#000;transform:scaleX(0.8688);transform-origin:0 0;">0001</div>
<div class="a t" style="left:193.50px;top:247px;line-height:14px;font-size:12px;color:#000;transform:scaleX(0.9250);transform-origin:0 0;">0000</div>
<div class="a t" style="left:235.50px;top:247px;line-height:14px;font-size:12px;color:#000;transform:scaleX(0.9250);transform-origin:0 0;">0000</div>
<div class="a t" style="left:277.50px;top:247px;line-height:14px;font-size:12px;color:#000;transform:scaleX(0.8688);transform-origin:0 0;">0001</div>
<div class="a t" style="left:319.50px;top:247px;line-height:14px;font-size:12px;color:#000;transform:scaleX(0.9250);transform-origin:0 0;">0000</div>
<div class="a t" style="left:361.50px;top:247px;line-height:14px;font-size:12px;color:#000;transform:scaleX(0.9250);transform-origin:0 0;">0000</div>
<div class="a" style="left:149px;top:263px;width:420px;height:15px;background:#DCF8DC;"></div>
<div class="a" style="left:149px;top:278px;width:420px;height:1px;background:#1A7AF5;"></div>
<div class="a t" style="left:151.50px;top:263px;line-height:14px;font-size:12px;color:#000;transform:scaleX(0.9250);transform-origin:0 0;">0000</div>
<div class="a t" style="left:193.50px;top:263px;line-height:14px;font-size:12px;color:#000;transform:scaleX(0.9250);transform-origin:0 0;">0000</div>
<div class="a t" style="left:235.50px;top:263px;line-height:14px;font-size:12px;color:#000;transform:scaleX(0.9250);transform-origin:0 0;">0000</div>
<div class="a t" style="left:277.50px;top:263px;line-height:14px;font-size:12px;color:#000;transform:scaleX(0.9250);transform-origin:0 0;">0000</div>
<div class="a t" style="left:319.50px;top:263px;line-height:14px;font-size:12px;color:#000;transform:scaleX(0.9250);transform-origin:0 0;">0000</div>
<div class="a t" style="left:361.50px;top:263px;line-height:14px;font-size:12px;color:#000;transform:scaleX(0.9250);transform-origin:0 0;">0000</div>
<div class="a" style="left:149px;top:279px;width:420px;height:15px;background:#fff;"></div>
<div class="a" style="left:149px;top:294px;width:420px;height:1px;background:#1A7AF5;"></div>
<div class="a t" style="left:151.50px;top:279px;line-height:14px;font-size:12px;color:#A0A0A0;transform:scaleX(1.0617);transform-origin:0 0;">0</div>
<div class="a t" style="left:193.50px;top:279px;line-height:14px;font-size:12px;color:#A0A0A0;transform:scaleX(1.0617);transform-origin:0 0;">0</div>
<div class="a t" style="left:235.50px;top:279px;line-height:14px;font-size:12px;color:#A0A0A0;transform:scaleX(1.0617);transform-origin:0 0;">0</div>
<div class="a t" style="left:277.50px;top:279px;line-height:14px;font-size:12px;color:#A0A0A0;transform:scaleX(1.0617);transform-origin:0 0;">0</div>
<div class="a t" style="left:319.50px;top:279px;line-height:14px;font-size:12px;color:#A0A0A0;transform:scaleX(1.0617);transform-origin:0 0;">0</div>
<div class="a t" style="left:361.50px;top:279px;line-height:14px;font-size:12px;color:#A0A0A0;transform:scaleX(1.0617);transform-origin:0 0;">0</div>
<div class="a" style="left:149px;top:295px;width:420px;height:15px;background:#DCF8DC;"></div>
<div class="a" style="left:149px;top:310px;width:420px;height:1px;background:#1A7AF5;"></div>
<div class="a t" style="left:151.50px;top:295px;line-height:14px;font-size:12px;color:#A0A0A0;transform:scaleX(1.0617);transform-origin:0 0;">0</div>
<div class="a t" style="left:193.50px;top:295px;line-height:14px;font-size:12px;color:#A0A0A0;transform:scaleX(1.0617);transform-origin:0 0;">0</div>
<div class="a t" style="left:235.50px;top:295px;line-height:14px;font-size:12px;color:#A0A0A0;transform:scaleX(1.0617);transform-origin:0 0;">0</div>
<div class="a t" style="left:277.50px;top:295px;line-height:14px;font-size:12px;color:#A0A0A0;transform:scaleX(1.0617);transform-origin:0 0;">0</div>
<div class="a t" style="left:319.50px;top:295px;line-height:14px;font-size:12px;color:#A0A0A0;transform:scaleX(1.0617);transform-origin:0 0;">0</div>
<div class="a t" style="left:361.50px;top:295px;line-height:14px;font-size:12px;color:#A0A0A0;transform:scaleX(1.0617);transform-origin:0 0;">0</div>
<div class="a" style="left:190px;top:151px;width:1px;height:160px;background:#1A7AF5;"></div>
<div class="a" style="left:232px;top:151px;width:1px;height:160px;background:#1A7AF5;"></div>
<div class="a" style="left:274px;top:151px;width:1px;height:160px;background:#1A7AF5;"></div>
<div class="a" style="left:316px;top:151px;width:1px;height:160px;background:#1A7AF5;"></div>
<div class="a" style="left:358px;top:151px;width:1px;height:160px;background:#1A7AF5;"></div>
<div class="a" style="left:400px;top:151px;width:1px;height:160px;background:#1A7AF5;"></div>
<div class="a" style="left:442px;top:151px;width:1px;height:160px;background:#1A7AF5;"></div>
<div class="a" style="left:484px;top:151px;width:1px;height:160px;background:#1A7AF5;"></div>
<div class="a" style="left:526px;top:151px;width:1px;height:160px;background:#1A7AF5;"></div>
<div class="a" style="left:568px;top:151px;width:1px;height:160px;background:#1A7AF5;"></div>
<div class="a t" style="left:27.80px;top:315px;line-height:14px;font-size:12px;color:#000;transform:scaleX(0.8908);transform-origin:0 0;">Number of sweeps = 10</div>
<div class="a t" style="left:285.00px;top:315px;line-height:14px;font-size:12px;color:#000;transform:scaleX(0.8793);transform-origin:0 0;">Allocated time:</div>
<div class="a" style="left:361px;top:315px;width:60px;height:15px;background:#FFFFFF;"></div>
<div class="a" style="left:361px;top:315px;width:60px;height:1px;background:#8E8A78;"></div>
<div class="a" style="left:361px;top:315px;width:1px;height:15px;background:#8E8A78;"></div>
<div class="a" style="left:362px;top:316px;width:60px;height:13px;background:#0A50DA;"></div>
<div class="a" style="left:28px;top:338px;width:78px;height:22px;background:#ECE9D8;"></div>
<div class="a" style="left:28px;top:338px;width:78px;height:1px;background:#FFFFFF;"></div>
<div class="a" style="left:28px;top:338px;width:1px;height:22px;background:#FFFFFF;"></div>
<div class="a" style="left:28px;top:359px;width:78px;height:1px;background:#716F64;"></div>
<div class="a" style="left:105px;top:338px;width:1px;height:22px;background:#716F64;"></div>
<div class="a" style="left:29px;top:339px;width:76px;height:1px;background:#ECE9D8;"></div>
<div class="a" style="left:29px;top:339px;width:1px;height:20px;background:#ECE9D8;"></div>
<div class="a" style="left:29px;top:358px;width:76px;height:1px;background:#ACA899;"></div>
<div class="a" style="left:104px;top:339px;width:1px;height:20px;background:#ACA899;"></div>
<div class="a" style="left:28px;top:338px;width:77px;height:1px;background:#FFFFFF;"></div>
<div class="a" style="left:28px;top:338px;width:1px;height:21px;background:#FFFFFF;"></div>
<div class="a t" style="left:34.40px;top:343px;line-height:14px;font-size:12px;color:#fff;transform:scaleX(0.8540);transform-origin:0 0;">Stimulus File...</div>
<div class="a t" style="left:33.40px;top:342px;line-height:14px;font-size:12px;color:#ACA899;transform:scaleX(0.8540);transform-origin:0 0;">Stimulus File...</div>
<div class="a t" style="left:109.70px;top:336px;line-height:14px;font-size:12px;color:#0000FF;transform:scaleX(0.8645);transform-origin:0 0;">First duration 45.00 ms (450 samples)</div>
<div class="a" style="left:28px;top:367px;width:78px;height:23px;background:#ECE9D8;"></div>
<div class="a" style="left:28px;top:367px;width:78px;height:1px;background:#FFFFFF;"></div>
<div class="a" style="left:28px;top:367px;width:1px;height:23px;background:#FFFFFF;"></div>
<div class="a" style="left:28px;top:389px;width:78px;height:1px;background:#716F64;"></div>
<div class="a" style="left:105px;top:367px;width:1px;height:23px;background:#716F64;"></div>
<div class="a" style="left:29px;top:368px;width:76px;height:1px;background:#ECE9D8;"></div>
<div class="a" style="left:29px;top:368px;width:1px;height:21px;background:#ECE9D8;"></div>
<div class="a" style="left:29px;top:388px;width:76px;height:1px;background:#ACA899;"></div>
<div class="a" style="left:104px;top:368px;width:1px;height:21px;background:#ACA899;"></div>
<div class="a" style="left:28px;top:367px;width:77px;height:1px;background:#FFFFFF;"></div>
<div class="a" style="left:28px;top:367px;width:1px;height:22px;background:#FFFFFF;"></div>
<div class="a t" style="left:45.10px;top:371px;line-height:14px;font-size:12px;color:#000;transform:scaleX(0.8531);transform-origin:0 0;">Summary</div>
<div class="a" style="left:16px;top:398px;width:68px;height:20px;background:#ECE9D8;"></div>
<div class="a" style="left:16px;top:418px;width:68px;height:1px;background:#716F64;"></div>
<div class="a" style="left:17px;top:417px;width:66px;height:1px;background:#ACA899;"></div>
<div class="a" style="left:84px;top:398px;width:1px;height:20px;background:#716F64;"></div>
<div class="a" style="left:83px;top:398px;width:1px;height:19px;background:#ACA899;"></div>
<div class="a t" style="left:23.50px;top:403px;line-height:14px;font-size:12px;color:#000;transform:scaleX(0.9089);transform-origin:0 0;">Channel #0</div>
<div class="a" style="left:85px;top:399px;width:66px;height:17px;background:#ECE9D8;"></div>
<div class="a" style="left:85px;top:399px;width:1px;height:17px;background:#FFFFFF;"></div>
<div class="a" style="left:86px;top:416px;width:64px;height:1px;background:#716F64;"></div>
<div class="a" style="left:86px;top:415px;width:63px;height:1px;background:#ACA899;"></div>
<div class="a" style="left:150px;top:399px;width:1px;height:17px;background:#716F64;"></div>
<div class="a" style="left:149px;top:399px;width:1px;height:17px;background:#ACA899;"></div>
<div class="a t" style="left:90.40px;top:401px;line-height:14px;font-size:12px;color:#000;transform:scaleX(0.9024);transform-origin:0 0;">Channel #1</div>
<div class="a" style="left:152px;top:399px;width:66px;height:17px;background:#ECE9D8;"></div>
<div class="a" style="left:152px;top:399px;width:1px;height:17px;background:#FFFFFF;"></div>
<div class="a" style="left:153px;top:416px;width:64px;height:1px;background:#716F64;"></div>
<div class="a" style="left:153px;top:415px;width:63px;height:1px;background:#ACA899;"></div>
<div class="a" style="left:217px;top:399px;width:1px;height:17px;background:#716F64;"></div>
<div class="a" style="left:216px;top:399px;width:1px;height:17px;background:#ACA899;"></div>
<div class="a t" style="left:157.60px;top:401px;line-height:14px;font-size:12px;color:#000;transform:scaleX(0.9024);transform-origin:0 0;">Channel #2</div>
<div class="a" style="left:219px;top:399px;width:66px;height:17px;background:#ECE9D8;"></div>
<div class="a" style="left:219px;top:399px;width:1px;height:17px;background:#FFFFFF;"></div>
<div class="a" style="left:220px;top:416px;width:64px;height:1px;background:#716F64;"></div>
<div class="a" style="left:220px;top:415px;width:63px;height:1px;background:#ACA899;"></div>
<div class="a" style="left:284px;top:399px;width:1px;height:17px;background:#716F64;"></div>
<div class="a" style="left:283px;top:399px;width:1px;height:17px;background:#ACA899;"></div>
<div class="a t" style="left:224.60px;top:401px;line-height:14px;font-size:12px;color:#000;transform:scaleX(0.9024);transform-origin:0 0;">Channel #3</div>
<div class="a" style="left:85px;top:398px;width:499px;height:1px;background:#716F64;"></div>
<div class="a" style="left:86px;top:397px;width:497px;height:1px;background:#ACA899;"></div>
<div class="a" style="left:324px;top:405px;width:13px;height:13px;background:#fff;"></div>
<div class="a" style="left:324px;top:405px;width:13px;height:1px;background:#ACA899;"></div>
<div class="a" style="left:324px;top:405px;width:1px;height:13px;background:#ACA899;"></div>
<div class="a" style="left:324px;top:417px;width:13px;height:1px;background:#FFFFFF;"></div>
<div class="a" style="left:336px;top:405px;width:1px;height:13px;background:#FFFFFF;"></div>
<div class="a" style="left:325px;top:406px;width:11px;height:1px;background:#716F64;"></div>
<div class="a" style="left:325px;top:406px;width:1px;height:11px;background:#716F64;"></div>
<div class="a" style="left:325px;top:416px;width:11px;height:1px;background:#ECE9D8;"></div>
<div class="a" style="left:335px;top:406px;width:1px;height:11px;background:#ECE9D8;"></div>
<div class="a" style="left:324px;top:405px;width:12px;height:1px;background:#ACA899;"></div>
<div class="a" style="left:324px;top:405px;width:1px;height:12px;background:#ACA899;"></div>
<div class="a t" style="left:342.20px;top:405px;line-height:14px;font-size:12px;color:#000;transform:scaleX(0.7993);transform-origin:0 0;">Alternate Waveforms</div>
<div class="a" style="left:11px;top:439px;width:68px;height:23px;background:#ECE9D8;"></div>
<div class="a" style="left:11px;top:439px;width:68px;height:1px;background:#FFFFFF;"></div>
<div class="a" style="left:11px;top:439px;width:1px;height:23px;background:#FFFFFF;"></div>
<div class="a" style="left:11px;top:461px;width:68px;height:1px;background:#716F64;"></div>
<div class="a" style="left:78px;top:439px;width:1px;height:23px;background:#716F64;"></div>
<div class="a" style="left:12px;top:440px;width:66px;height:1px;background:#ECE9D8;"></div>
<div class="a" style="left:12px;top:440px;width:1px;height:21px;background:#ECE9D8;"></div>
<div class="a" style="left:12px;top:460px;width:66px;height:1px;background:#ACA899;"></div>
<div class="a" style="left:77px;top:440px;width:1px;height:21px;background:#ACA899;"></div>
<div class="a" style="left:11px;top:439px;width:67px;height:1px;background:#FFFFFF;"></div>
<div class="a" style="left:11px;top:439px;width:1px;height:22px;background:#FFFFFF;"></div>
<div class="a t" style="left:37.40px;top:443px;line-height:14px;font-size:12px;color:#000;transform:scaleX(0.8764);transform-origin:0 0;">OK</div>
<div class="a" style="left:102px;top:439px;width:68px;height:23px;background:#ECE9D8;"></div>
<div class="a" style="left:102px;top:439px;width:68px;height:1px;background:#FFFFFF;"></div>
<div class="a" style="left:102px;top:439px;width:1px;height:23px;background:#FFFFFF;"></div>
<div class="a" style="left:102px;top:461px;width:68px;height:1px;background:#716F64;"></div>
<div class="a" style="left:169px;top:439px;width:1px;height:23px;background:#716F64;"></div>
<div class="a" style="left:103px;top:440px;width:66px;height:1px;background:#ECE9D8;"></div>
<div class="a" style="left:103px;top:440px;width:1px;height:21px;background:#ECE9D8;"></div>
<div class="a" style="left:103px;top:460px;width:66px;height:1px;background:#ACA899;"></div>
<div class="a" style="left:168px;top:440px;width:1px;height:21px;background:#ACA899;"></div>
<div class="a" style="left:102px;top:439px;width:67px;height:1px;background:#FFFFFF;"></div>
<div class="a" style="left:102px;top:439px;width:1px;height:22px;background:#FFFFFF;"></div>
<div class="a t" style="left:118.90px;top:443px;line-height:14px;font-size:12px;color:#000;transform:scaleX(0.9154);transform-origin:0 0;">Cancel</div>
<div class="a" style="left:194px;top:439px;width:68px;height:23px;background:#ECE9D8;"></div>
<div class="a" style="left:194px;top:439px;width:68px;height:1px;background:#FFFFFF;"></div>
<div class="a" style="left:194px;top:439px;width:1px;height:23px;background:#FFFFFF;"></div>
<div class="a" style="left:194px;top:461px;width:68px;height:1px;background:#716F64;"></div>
<div class="a" style="left:261px;top:439px;width:1px;height:23px;background:#716F64;"></div>
<div class="a" style="left:195px;top:440px;width:66px;height:1px;background:#ECE9D8;"></div>
<div class="a" style="left:195px;top:440px;width:1px;height:21px;background:#ECE9D8;"></div>
<div class="a" style="left:195px;top:460px;width:66px;height:1px;background:#ACA899;"></div>
<div class="a" style="left:260px;top:440px;width:1px;height:21px;background:#ACA899;"></div>
<div class="a" style="left:194px;top:439px;width:67px;height:1px;background:#FFFFFF;"></div>
<div class="a" style="left:194px;top:439px;width:1px;height:22px;background:#FFFFFF;"></div>
<div class="a t" style="left:216.75px;top:443px;line-height:14px;font-size:12px;color:#000;transform:scaleX(0.9114);transform-origin:0 0;">Help</div>
<div class="a" style="left:290px;top:436px;width:131px;height:1px;background:#ACA899;"></div>
<div class="a" style="left:290px;top:436px;width:1px;height:34px;background:#ACA899;"></div>
<div class="a" style="left:290px;top:469px;width:131px;height:1px;background:#FFFFFF;"></div>
<div class="a t" style="left:294.00px;top:437px;line-height:14px;font-size:12px;color:#000;transform:scaleX(0.8805);transform-origin:0 0;">Acquisition mode:</div>
<div class="a t" style="left:312.40px;top:449px;line-height:14px;font-size:12px;color:#000;transform:scaleX(0.8620);transform-origin:0 0;">Episodic stimulation</div>
<div class="a" style="left:401px;top:150px;width:345px;height:360px;background:#0842D8;border-radius:7px 7px 0 0"></div>
<div class="a" style="left:401px;top:150px;width:345px;height:30px;border-radius:7px 7px 0 0;background:linear-gradient(#4A9CFF 0px,#2C7EFF 1.5px,#0B60F2 3px,#0056E6 6px,#0052E0 14px,#0056E8 19px,#0463FC 23px,#0868FF 26.5px,#0052E0 28px,#003CC4 30px)"></div>
<div class="a" style="left:401px;top:180px;width:4px;height:330px;background:linear-gradient(90deg,#0026D0,#0846DC 40%,#1058E8 75%,#0A4CD8)"></div>
<div class="a" style="left:741px;top:180px;width:2px;height:330px;background:linear-gradient(90deg,#0A4CD8,#0840D8)"></div>
<div class="a" style="left:401px;top:507px;width:342px;height:3px;background:linear-gradient(#0A4CD8,#0840D8)"></div>
<div class="a" style="left:405px;top:180px;width:336px;height:327px;background:#ECE9D8;"></div>
<svg class="a" style="left:404px;top:155px" width="22" height="22" viewBox="0 0 22 22" shape-rendering="crispEdges">
<path d="M6 3h8l5 5v11h-13z" fill="#FFFBF0"/>
<path d="M14 3h1v1h1v1h1v1h1v1h1v1h1v12h-14v-1h13v-11h-1v-1h-1v-1h-1v-1h-1z" fill="#000"/>
<path d="M6 3h8v1h-7v15h-1z" fill="#B8C8F0"/>
<path d="M10 5h1v4h-1zM9 9h1v1h-1zM12 9h1v2h1v1h-1v-1h-1zM10 11h1v4h-1zM9 15h1v1h-1zM13 12h1v3h1v1h-2z" fill="#D050A0"/>
<path d="M7 17h10v1h-10z" fill="#4060C0"/>
<path d="M3 9h14v1h-14zM4 8h2v1h-2zM4 10h2v1h-2zM7 7h2v1h-2zM7 11h2v1h-2z" fill="#0000F0"/>
</svg>
<div class="a t" style="left:426.90px;top:159px;line-height:16px;font-size:13px;color:#fff;font-weight:bold;text-shadow:1px 1px 0 #0A1E8C;">Waveform Preview</div>
<div class="a" style="left:718px;top:156px;width:19px;height:19px;border:1px solid #fff;border-radius:3px;background:radial-gradient(circle at 30% 25%,#F5A58A 0%,#E2653E 45%,#C4441A 100%)"></div>
<svg class="a" style="left:722px;top:160px" width="13" height="13" viewBox="0 0 13 13"><path d="M1.5 1.5L11.5 11.5M11.5 1.5L1.5 11.5" stroke="#fff" stroke-width="2.2" stroke-linecap="square"/></svg>
<div class="a" style="left:410px;top:185px;width:328px;height:1px;background:#ACA899;"></div>
<div class="a" style="left:410px;top:185px;width:1px;height:276px;background:#ACA899;"></div>
<div class="a" style="left:410px;top:460px;width:328px;height:1px;background:#FFFFFF;"></div>
<div class="a" style="left:737px;top:185px;width:1px;height:276px;background:#FFFFFF;"></div>
<div class="a" style="left:411px;top:186px;width:326px;height:1px;background:#716F64;"></div>
<div class="a" style="left:411px;top:186px;width:1px;height:274px;background:#716F64;"></div>
<div class="a" style="left:412px;top:187px;width:325px;height:13px;background:#ECE9D8;"></div>
<div class="a" style="left:412px;top:187px;width:324px;height:1px;background:#FFFFFF;"></div>
<div class="a" style="left:412px;top:200px;width:325px;height:1px;background:#000;"></div>
<svg class="a" style="left:0;top:0" width="743" height="510"><path d="M521.5 187.5L537.5 187.5L529.5 200z" fill="#0F7F80"/><rect x="521.5" y="187" width="16" height="1.5" fill="#204848"/><path d="M568 187.5L584 187.5L576 200z" fill="#0F7F80"/><rect x="568" y="187" width="16" height="1.5" fill="#204848"/><path d="M615.5 187.5L631.5 187.5L623.5 200z" fill="#0F7F80"/><rect x="615.5" y="187" width="16" height="1.5" fill="#204848"/><path d="M662.5 187.5L678.5 187.5L670.5 200z" fill="#0F7F80"/><rect x="662.5" y="187" width="16" height="1.5" fill="#204848"/></svg>
<div class="a t" style="left:515.00px;top:187px;line-height:14px;font-size:12px;color:#FF0000;transform:scaleX(0.7776);transform-origin:0 0;">1</div>
<div class="a t" style="left:584.80px;top:187px;line-height:14px;font-size:12px;color:#000;">2</div>
<div class="a t" style="left:609.10px;top:187px;line-height:14px;font-size:12px;color:#000;">3</div>
<div class="a t" style="left:678.40px;top:187px;line-height:14px;font-size:12px;color:#000;">4</div>
<div class="a" style="left:412px;top:201px;width:30px;height:79px;background:#A8A494;"></div>
<div class="a" style="left:442px;top:201px;width:39px;height:79px;background:#ECE9D8;"></div>
<div class="a" style="left:482px;top:201px;width:236px;height:79px;background:#fff;"></div>
<div class="a" style="left:412px;top:281px;width:69px;height:125px;background:#ECE9D8;"></div>
<div class="a" style="left:482px;top:281px;width:236px;height:125px;background:#fff;"></div>
<svg class="a" style="left:718px;top:201px" width="18" height="205"><defs><pattern id="dth" width="2" height="2" patternUnits="userSpaceOnUse"><rect width="2" height="2" fill="#ECE9D8"/><rect width="1" height="1" fill="#fff"/><rect x="1" y="1" width="1" height="1" fill="#fff"/></pattern></defs><rect width="18" height="205" fill="url(#dth)"/></svg>
<div class="a" style="left:718px;top:201px;width:18px;height:17px;background:#ECE9D8;"></div>
<div class="a" style="left:718px;top:201px;width:18px;height:1px;background:#FFFFFF;"></div>
<div class="a" style="left:718px;top:201px;width:1px;height:17px;background:#FFFFFF;"></div>
<div class="a" style="left:718px;top:217px;width:18px;height:1px;background:#716F64;"></div>
<div class="a" style="left:735px;top:201px;width:1px;height:17px;background:#716F64;"></div>
<div class="a" style="left:719px;top:202px;width:16px;height:1px;background:#ECE9D8;"></div>
<div class="a" style="left:719px;top:202px;width:1px;height:15px;background:#ECE9D8;"></div>
<div class="a" style="left:719px;top:216px;width:16px;height:1px;background:#ACA899;"></div>
<div class="a" style="left:734px;top:202px;width:1px;height:15px;background:#ACA899;"></div>
<div class="a" style="left:718px;top:201px;width:17px;height:1px;background:#FFFFFF;"></div>
<div class="a" style="left:718px;top:201px;width:1px;height:16px;background:#FFFFFF;"></div>
<div class="a" style="left:718px;top:284px;width:18px;height:42px;background:#ECE9D8;"></div>
<div class="a" style="left:718px;top:284px;width:18px;height:1px;background:#FFFFFF;"></div>
<div class="a" style="left:718px;top:284px;width:1px;height:42px;background:#FFFFFF;"></div>
<div class="a" style="left:718px;top:325px;width:18px;height:1px;background:#716F64;"></div>
<div class="a" style="left:735px;top:284px;width:1px;height:42px;background:#716F64;"></div>
<div class="a" style="left:719px;top:285px;width:16px;height:1px;background:#ECE9D8;"></div>
<div class="a" style="left:719px;top:285px;width:1px;height:40px;background:#ECE9D8;"></div>
<div class="a" style="left:719px;top:324px;width:16px;height:1px;background:#ACA899;"></div>
<div class="a" style="left:734px;top:285px;width:1px;height:40px;background:#ACA899;"></div>
<div class="a" style="left:718px;top:284px;width:17px;height:1px;background:#FFFFFF;"></div>
<div class="a" style="left:718px;top:284px;width:1px;height:41px;background:#FFFFFF;"></div>
<div class="a" style="left:718px;top:391px;width:18px;height:15px;background:#ECE9D8;"></div>
<div class="a" style="left:718px;top:391px;width:18px;height:1px;background:#FFFFFF;"></div>
<div class="a" style="left:718px;top:391px;width:1px;height:15px;background:#FFFFFF;"></div>
<div class="a" style="left:718px;top:405px;width:18px;height:1px;background:#716F64;"></div>
<div class="a" style="left:735px;top:391px;width:1px;height:15px;background:#716F64;"></div>
<div class="a" style="left:719px;top:392px;width:16px;height:1px;background:#ECE9D8;"></div>
<div class="a" style="left:719px;top:392px;width:1px;height:13px;background:#ECE9D8;"></div>
<div class="a" style="left:719px;top:404px;width:16px;height:1px;background:#ACA899;"></div>
<div class="a" style="left:734px;top:392px;width:1px;height:13px;background:#ACA899;"></div>
<div class="a" style="left:718px;top:391px;width:17px;height:1px;background:#FFFFFF;"></div>
<div class="a" style="left:718px;top:391px;width:1px;height:14px;background:#FFFFFF;"></div>
<svg class="a" style="left:0;top:0" width="743" height="510" shape-rendering="crispEdges"><rect x="481" y="201" width="1" height="210" fill="#000"/><rect x="412" y="280" width="306" height="1" fill="#000"/><rect x="717" y="201" width="1" height="205" fill="#A8A8A8"/><rect x="412" y="406" width="306" height="1" fill="#000"/><rect x="482" y="239" width="236" height="1" fill="#C0C0C0"/><rect x="482" y="336" width="236" height="1" fill="#C0C0C0"/><rect x="599" y="201" width="1" height="205" fill="#C0C0C0"/><rect x="477" y="219" width="4" height="1" fill="#000"/><rect x="477" y="239" width="4" height="1" fill="#000"/><rect x="477" y="259" width="4" height="1" fill="#000"/><rect x="477" y="281" width="4" height="1" fill="#000"/><rect x="477" y="295" width="4" height="1" fill="#000"/><rect x="477" y="309" width="4" height="1" fill="#000"/><rect x="477" y="322" width="4" height="1" fill="#000"/><rect x="477" y="336" width="4" height="1" fill="#000"/><rect x="477" y="350" width="4" height="1" fill="#000"/><rect x="477" y="364" width="4" height="1" fill="#000"/><rect x="477" y="378" width="4" height="1" fill="#000"/><rect x="477" y="392" width="4" height="1" fill="#000"/><rect x="481" y="407" width="1" height="4" fill="#000"/><rect x="599" y="407" width="1" height="4" fill="#000"/><rect x="717" y="407" width="1" height="4" fill="#000"/><rect x="540" y="407" width="1" height="2" fill="#000"/><rect x="658" y="407" width="1" height="2" fill="#000"/><rect x="482" y="264" width="236" height="1" fill="#FF0000"/><rect x="482" y="392" width="236" height="1" fill="#FF0000"/><rect x="485" y="322" width="2" height="70" fill="#FF0000"/><rect x="522" y="322" width="2" height="70" fill="#FF0000"/></svg>
<div class="a t" style="left:454.00px;top:201px;line-height:14px;font-size:12px;color:#000;transform:scaleX(0.9585);transform-origin:0 0;">100</div>
<div class="a t" style="left:465.80px;top:233px;line-height:14px;font-size:12px;color:#000;transform:scaleX(1.0766);transform-origin:0 0;">0</div>
<div class="a t" style="left:450.40px;top:265px;line-height:14px;font-size:12px;color:#000;transform:scaleX(0.9488);transform-origin:0 0;">-100</div>
<div class="a t" style="left:466.00px;top:281px;line-height:14px;font-size:12px;color:#000;transform:scaleX(1.0766);transform-origin:0 0;">8</div>
<div class="a t" style="left:465.80px;top:330px;line-height:14px;font-size:12px;color:#000;transform:scaleX(1.0766);transform-origin:0 0;">4</div>
<div class="a t" style="left:465.80px;top:386px;line-height:14px;font-size:12px;color:#000;transform:scaleX(1.0766);transform-origin:0 0;">0</div>
<div class="a t" style="left:478.15px;top:413px;line-height:14px;font-size:12px;color:#000;">0</div>
<div class="a t" style="left:589.00px;top:413px;line-height:14px;font-size:12px;color:#000;transform:scaleX(0.9485);transform-origin:0 0;">100</div>
<div class="a t" style="left:707.00px;top:413px;line-height:14px;font-size:12px;color:#000;transform:scaleX(0.9485);transform-origin:0 0;">200</div>
<div class="a t" style="left:576.40px;top:427px;line-height:14px;font-size:12px;color:#000;transform:scaleX(0.8962);transform-origin:0 0;">Time (ms) Sweep:1 Visible:1 of 1</div>
<div class="a" style="left:389px;top:233.5px;width:60px;height:14px;transform:rotate(-90deg);text-align:center;font-size:12px;line-height:14px"><span style="display:inline-block;transform:scaleX(0.86);letter-spacing:1.0px">Cmd 0</span></div>
<div class="a" style="left:404px;top:232.5px;width:60px;height:14px;transform:rotate(-90deg);text-align:center;font-size:12px;line-height:14px"><span style="display:inline-block;transform:scaleX(0.86);letter-spacing:1.3px">(mV)</span></div>
<div class="a" style="left:389px;top:336px;width:60px;height:14px;transform:rotate(-90deg);text-align:center;font-size:12px;line-height:14px"><span style="display:inline-block;transform:scaleX(0.86);letter-spacing:2.2px">D0</span></div>
<div class="a" style="left:404px;top:336px;width:60px;height:14px;transform:rotate(-90deg);text-align:center;font-size:12px;line-height:14px"><span style="display:inline-block;transform:scaleX(1.0);letter-spacing:2.2px">(V)</span></div>
<div class="a" style="left:442px;top:226px;width:13px;height:14px;background:#ECE9D8;"></div>
<div class="a" style="left:442px;top:226px;width:13px;height:1px;background:#FFFFFF;"></div>
<div class="a" style="left:442px;top:226px;width:1px;height:14px;background:#FFFFFF;"></div>
<div class="a" style="left:442px;top:239px;width:13px;height:1px;background:#716F64;"></div>
<div class="a" style="left:454px;top:226px;width:1px;height:14px;background:#716F64;"></div>
<div class="a" style="left:443px;top:227px;width:11px;height:1px;background:#ECE9D8;"></div>
<div class="a" style="left:443px;top:227px;width:1px;height:12px;background:#ECE9D8;"></div>
<div class="a" style="left:443px;top:238px;width:11px;height:1px;background:#ACA899;"></div>
<div class="a" style="left:453px;top:227px;width:1px;height:12px;background:#ACA899;"></div>
<div class="a" style="left:442px;top:226px;width:12px;height:1px;background:#FFFFFF;"></div>
<div class="a" style="left:442px;top:226px;width:1px;height:13px;background:#FFFFFF;"></div>
<div class="a" style="left:442px;top:240px;width:13px;height:14px;background:#ECE9D8;"></div>
<div class="a" style="left:442px;top:240px;width:13px;height:1px;background:#FFFFFF;"></div>
<div class="a" style="left:442px;top:240px;width:1px;height:14px;background:#FFFFFF;"></div>
<div class="a" style="left:442px;top:253px;width:13px;height:1px;background:#716F64;"></div>
<div class="a" style="left:454px;top:240px;width:1px;height:14px;background:#716F64;"></div>
<div class="a" style="left:443px;top:241px;width:11px;height:1px;background:#ECE9D8;"></div>
<div class="a" style="left:443px;top:241px;width:1px;height:12px;background:#ECE9D8;"></div>
<div class="a" style="left:443px;top:252px;width:11px;height:1px;background:#ACA899;"></div>
<div class="a" style="left:453px;top:241px;width:1px;height:12px;background:#ACA899;"></div>
<div class="a" style="left:442px;top:240px;width:12px;height:1px;background:#FFFFFF;"></div>
<div class="a" style="left:442px;top:240px;width:1px;height:13px;background:#FFFFFF;"></div>
<svg class="a" style="left:0;top:0" width="743" height="510" shape-rendering="crispEdges"><path d="M447 228h1v2h1v2h1v2h1v2h-7v-2h1v-2h1v-2h1z" fill="#000"/><path d="M444 242h7v2h-1v2h-1v2h-1v2h-1v-2h-1v-2h-1v-2h-1z" fill="#000"/></svg>
<div class="a" style="left:412px;top:407px;width:14px;height:13px;background:#ECE9D8;"></div>
<div class="a" style="left:412px;top:407px;width:14px;height:1px;background:#FFFFFF;"></div>
<div class="a" style="left:412px;top:407px;width:1px;height:13px;background:#FFFFFF;"></div>
<div class="a" style="left:412px;top:419px;width:14px;height:1px;background:#716F64;"></div>
<div class="a" style="left:425px;top:407px;width:1px;height:13px;background:#716F64;"></div>
<div class="a" style="left:413px;top:408px;width:12px;height:1px;background:#ECE9D8;"></div>
<div class="a" style="left:413px;top:408px;width:1px;height:11px;background:#ECE9D8;"></div>
<div class="a" style="left:413px;top:418px;width:12px;height:1px;background:#ACA899;"></div>
<div class="a" style="left:424px;top:408px;width:1px;height:11px;background:#ACA899;"></div>
<div class="a" style="left:412px;top:407px;width:13px;height:1px;background:#FFFFFF;"></div>
<div class="a" style="left:412px;top:407px;width:1px;height:12px;background:#FFFFFF;"></div>
<div class="a" style="left:426px;top:407px;width:14px;height:13px;background:#ECE9D8;"></div>
<div class="a" style="left:426px;top:407px;width:14px;height:1px;background:#FFFFFF;"></div>
<div class="a" style="left:426px;top:407px;width:1px;height:13px;background:#FFFFFF;"></div>
<div class="a" style="left:426px;top:419px;width:14px;height:1px;background:#716F64;"></div>
<div class="a" style="left:439px;top:407px;width:1px;height:13px;background:#716F64;"></div>
<div class="a" style="left:427px;top:408px;width:12px;height:1px;background:#ECE9D8;"></div>
<div class="a" style="left:427px;top:408px;width:1px;height:11px;background:#ECE9D8;"></div>
<div class="a" style="left:427px;top:418px;width:12px;height:1px;background:#ACA899;"></div>
<div class="a" style="left:438px;top:408px;width:1px;height:11px;background:#ACA899;"></div>
<div class="a" style="left:426px;top:407px;width:13px;height:1px;background:#FFFFFF;"></div>
<div class="a" style="left:426px;top:407px;width:1px;height:12px;background:#FFFFFF;"></div>
<svg class="a" style="left:0;top:0" width="743" height="510" shape-rendering="crispEdges"><path d="M414 412h2v-1h2v-1h2v-1h3v7h-3v-1h-2v-1h-2v-1h-2z" fill="#000"/><path d="M428 409h3v1h2v1h2v1h2v1h-2v1h-2v1h-2v1h-3z" fill="#000"/></svg>
<svg class="a" style="left:482px;top:443px" width="255" height="16"><rect width="255" height="16" fill="url(#dth)"/></svg>
<div class="a" style="left:482px;top:443px;width:17px;height:16px;background:#ECE9D8;"></div>
<div class="a" style="left:482px;top:443px;width:17px;height:1px;background:#FFFFFF;"></div>
<div class="a" style="left:482px;top:443px;width:1px;height:16px;background:#FFFFFF;"></div>
<div class="a" style="left:482px;top:458px;width:17px;height:1px;background:#716F64;"></div>
<div class="a" style="left:498px;top:443px;width:1px;height:16px;background:#716F64;"></div>
<div class="a" style="left:483px;top:444px;width:15px;height:1px;background:#ECE9D8;"></div>
<div class="a" style="left:483px;top:444px;width:1px;height:14px;background:#ECE9D8;"></div>
<div class="a" style="left:483px;top:457px;width:15px;height:1px;background:#ACA899;"></div>
<div class="a" style="left:497px;top:444px;width:1px;height:14px;background:#ACA899;"></div>
<div class="a" style="left:482px;top:443px;width:16px;height:1px;background:#FFFFFF;"></div>
<div class="a" style="left:482px;top:443px;width:1px;height:15px;background:#FFFFFF;"></div>
<div class="a" style="left:720px;top:443px;width:17px;height:16px;background:#ECE9D8;"></div>
<div class="a" style="left:720px;top:443px;width:17px;height:1px;background:#FFFFFF;"></div>
<div class="a" style="left:720px;top:443px;width:1px;height:16px;background:#FFFFFF;"></div>
<div class="a" style="left:720px;top:458px;width:17px;height:1px;background:#716F64;"></div>
<div class="a" style="left:736px;top:443px;width:1px;height:16px;background:#716F64;"></div>
<div class="a" style="left:721px;top:444px;width:15px;height:1px;background:#ECE9D8;"></div>
<div class="a" style="left:721px;top:444px;width:1px;height:14px;background:#ECE9D8;"></div>
<div class="a" style="left:721px;top:457px;width:15px;height:1px;background:#ACA899;"></div>
<div class="a" style="left:735px;top:444px;width:1px;height:14px;background:#ACA899;"></div>
<div class="a" style="left:720px;top:443px;width:16px;height:1px;background:#FFFFFF;"></div>
<div class="a" style="left:720px;top:443px;width:1px;height:15px;background:#FFFFFF;"></div>
<svg class="a" style="left:0;top:0" width="743" height="510" shape-rendering="crispEdges"><path d="M487 451h1v-1h1v-1h1v-1h1v7h-1v-1h-1v-1h-1v-1h-1z" fill="#ACA899"/><path d="M727 448h1v1h1v1h1v1h1v1h-1v1h-1v1h-1v1h-1z" fill="#ACA899"/><path d="M727 207h1v1h1v1h1v1h1v1h-7v-1h1v-1h1v-1h1z" fill="#000"/><path d="M724 397h7v1h-1v1h-1v1h-1v1h-1v-1h-1v-1h-1v-1h-1z" fill="#000"/></svg>
<svg class="a" style="left:728px;top:494px" width="13" height="13" shape-rendering="crispEdges"><path d="M12 1v1h-1v1h-1v1h-1v1h-1v1h-1v1h-1v1h-1v1h-1v1h-1v1h-1v1h-1v1h-1" stroke="none"/><g fill="#ACA899"><rect x="11" y="1" width="1" height="1"/><rect x="10" y="2" width="1" height="1"/><rect x="9" y="3" width="1" height="1"/><rect x="8" y="4" width="1" height="1"/><rect x="7" y="5" width="1" height="1"/><rect x="6" y="6" width="1" height="1"/><rect x="5" y="7" width="1" height="1"/><rect x="4" y="8" width="1" height="1"/><rect x="3" y="9" width="1" height="1"/><rect x="2" y="10" width="1" height="1"/><rect x="1" y="11" width="1" height="1"/><rect x="11" y="5" width="1" height="1"/><rect x="10" y="6" width="1" height="1"/><rect x="9" y="7" width="1" height="1"/><rect x="8" y="8" width="1" height="1"/><rect x="7" y="9" width="1" height="1"/><rect x="6" y="10" width="1" height="1"/><rect x="5" y="11" width="1" height="1"/><rect x="11" y="9" width="1" height="1"/><rect x="10" y="10" width="1" height="1"/><rect x="9" y="11" width="1" height="1"/></g></svg>
<div class="a" style="left:453px;top:474px;width:75px;height:22px;background:#ECE9D8;"></div>
<div class="a" style="left:453px;top:474px;width:75px;height:1px;background:#FFFFFF;"></div>
<div class="a" style="left:453px;top:474px;width:1px;height:22px;background:#FFFFFF;"></div>
<div class="a" style="left:453px;top:495px;width:75px;height:1px;background:#716F64;"></div>
<div class="a" style="left:527px;top:474px;width:1px;height:22px;background:#716F64;"></div>
<div class="a" style="left:454px;top:475px;width:73px;height:1px;background:#ECE9D8;"></div>
<div class="a" style="left:454px;top:475px;width:1px;height:20px;background:#ECE9D8;"></div>
<div class="a" style="left:454px;top:494px;width:73px;height:1px;background:#ACA899;"></div>
<div class="a" style="left:526px;top:475px;width:1px;height:20px;background:#ACA899;"></div>
<div class="a" style="left:453px;top:474px;width:74px;height:1px;background:#FFFFFF;"></div>
<div class="a" style="left:453px;top:474px;width:1px;height:21px;background:#FFFFFF;"></div>
<div class="a t" style="left:460.90px;top:478px;line-height:14px;font-size:12px;color:#000;transform:scaleX(0.8615);transform-origin:0 0;">=&gt; Clipboard</div>
<div class="a" style="left:535px;top:474px;width:75px;height:23px;background:#ECE9D8;"></div>
<div class="a" style="left:535px;top:474px;width:75px;height:1px;background:#000;"></div>
<div class="a" style="left:535px;top:474px;width:1px;height:23px;background:#000;"></div>
<div class="a" style="left:535px;top:496px;width:75px;height:1px;background:#000;"></div>
<div class="a" style="left:609px;top:474px;width:1px;height:23px;background:#000;"></div>
<div class="a" style="left:536px;top:475px;width:73px;height:21px;background:#ECE9D8;"></div>
<div class="a" style="left:536px;top:475px;width:73px;height:1px;background:#FFFFFF;"></div>
<div class="a" style="left:536px;top:475px;width:1px;height:21px;background:#FFFFFF;"></div>
<div class="a" style="left:536px;top:495px;width:73px;height:1px;background:#716F64;"></div>
<div class="a" style="left:608px;top:475px;width:1px;height:21px;background:#716F64;"></div>
<div class="a" style="left:537px;top:476px;width:71px;height:1px;background:#ECE9D8;"></div>
<div class="a" style="left:537px;top:476px;width:1px;height:19px;background:#ECE9D8;"></div>
<div class="a" style="left:537px;top:494px;width:71px;height:1px;background:#ACA899;"></div>
<div class="a" style="left:607px;top:476px;width:1px;height:19px;background:#ACA899;"></div>
<div class="a" style="left:536px;top:475px;width:72px;height:1px;background:#FFFFFF;"></div>
<div class="a" style="left:536px;top:475px;width:1px;height:20px;background:#FFFFFF;"></div>
<div class="a t" style="left:559.30px;top:478px;line-height:14px;font-size:12px;color:#000;transform:scaleX(0.8603);transform-origin:0 0;">Close</div>
<div class="a" style="left:617px;top:474px;width:75px;height:23px;background:#ECE9D8;"></div>
<div class="a" style="left:617px;top:474px;width:75px;height:1px;background:#FFFFFF;"></div>
<div class="a" style="left:617px;top:474px;width:1px;height:23px;background:#FFFFFF;"></div>
<div class="a" style="left:617px;top:496px;width:75px;height:1px;background:#716F64;"></div>
<div class="a" style="left:691px;top:474px;width:1px;height:23px;background:#716F64;"></div>
<div class="a" style="left:618px;top:475px;width:73px;height:1px;background:#ECE9D8;"></div>
<div class="a" style="left:618px;top:475px;width:1px;height:21px;background:#ECE9D8;"></div>
<div class="a" style="left:618px;top:495px;width:73px;height:1px;background:#ACA899;"></div>
<div class="a" style="left:690px;top:475px;width:1px;height:21px;background:#ACA899;"></div>
<div class="a" style="left:617px;top:474px;width:74px;height:1px;background:#FFFFFF;"></div>
<div class="a" style="left:617px;top:474px;width:1px;height:22px;background:#FFFFFF;"></div>
<div class="a t" style="left:642.85px;top:478px;line-height:14px;font-size:12px;color:#000;transform:scaleX(0.9438);transform-origin:0 0;">Help</div>
</body></html>
